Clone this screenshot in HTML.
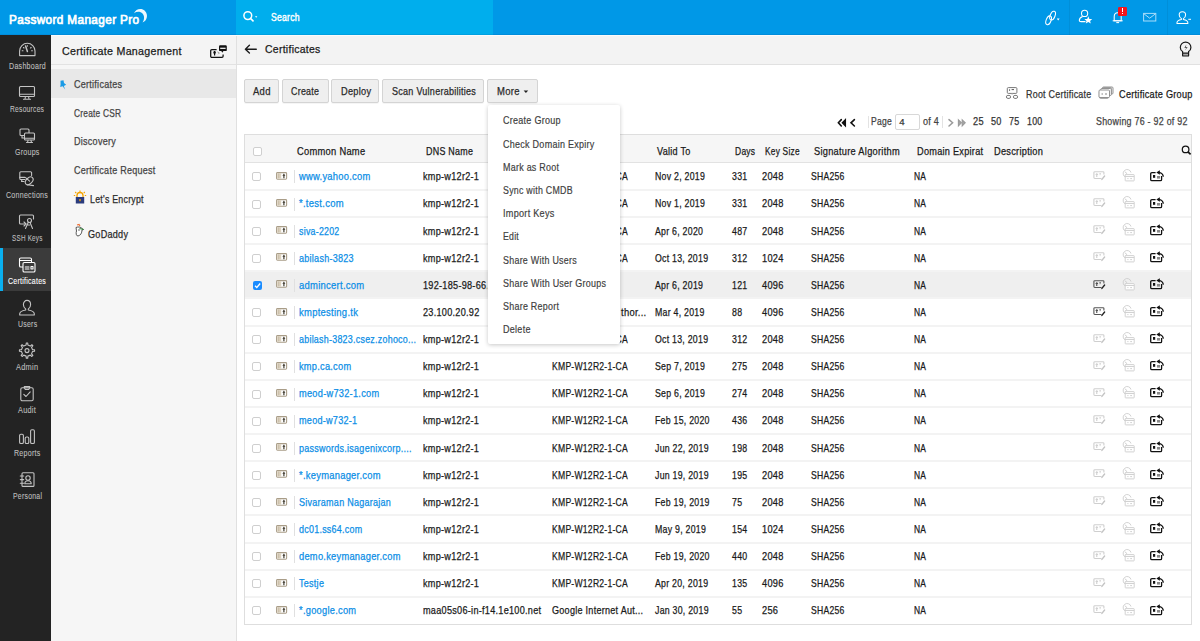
<!DOCTYPE html>
<html><head><meta charset="utf-8"><style>
html,body{margin:0;padding:0;}
body{width:1200px;height:641px;overflow:hidden;position:relative;background:#fff;font-family:"Liberation Sans", sans-serif;}
.t{position:absolute;white-space:nowrap;line-height:1;}
svg{overflow:visible}
</style></head><body>
<div style="position:absolute;left:0px;top:0px;width:1200px;height:35px;background:#0098e7"></div>
<div style="position:absolute;left:236px;top:0px;width:257px;height:35px;background:#00aeed"></div>
<div style="position:absolute;left:0px;top:34px;width:1200px;height:1px;background:rgba(0,40,120,0.10)"></div>
<div style="position:absolute;left:1069px;top:0px;width:1px;height:35px;background:rgba(0,0,0,0.06)"></div>
<div style="position:absolute;left:1167px;top:0px;width:1px;height:35px;background:rgba(0,0,0,0.06)"></div>
<div class="t" style="left:9.10px;top:14.00px;font-size:12.3px;letter-spacing:0.4px;transform:scaleX(0.9564);transform-origin:0 0;color:#fff;font-weight:normal;-webkit-text-stroke:0.7px #fff;">Password Manager Pro</div>
<svg style="position:absolute;left:130px;top:6px" width="20" height="20" viewBox="0 0 20 20"><path d="M4 7.3 C5.5 3.6 9.5 2.2 12.8 3.5 C17 5.3 18.3 10.6 15.6 14.3 C14.8 15.3 13.6 16.1 12.5 16.4 C14.6 13.8 14.6 9.8 12.5 7.6 C10.4 5.4 6.9 5.3 4 7.3 Z" fill="#fff" opacity="0.93"/></svg>
<svg style="position:absolute;left:238px;top:6px" width="24" height="20" viewBox="238 6 24 20"><circle cx="247.8" cy="15.6" r="3.9" stroke="#fff" stroke-width="1.5" fill="none"/><path d="M250.6 18.5 L253 20.9" stroke="#fff" stroke-width="1.7" stroke-linecap="round"/><path d="M255 16.3 L257.4 16.3 L256.2 17.7 Z" fill="#fff"/></svg>
<div class="t" style="left:271.10px;top:13.00px;font-size:10.3px;letter-spacing:0.3px;transform:scaleX(0.8389);transform-origin:0 0;color:#fff;font-weight:normal;-webkit-text-stroke:0.4px #fff;">Search</div>
<svg style="position:absolute;left:1040px;top:5px" width="25" height="25" viewBox="1040 5 25 25"><ellipse cx="1052.6" cy="15.6" rx="2.4" ry="4.6" transform="rotate(22 1052.6 15.6)" stroke="#fff" stroke-width="1.05" fill="none"/><ellipse cx="1048.6" cy="20.3" rx="2.4" ry="4.6" transform="rotate(22 1048.6 20.3)" stroke="#fff" stroke-width="1.05" fill="none"/><path d="M1056.8 18.6 L1059.6 18.6 L1058.2 20.4 Z" fill="#fff"/></svg>
<svg style="position:absolute;left:1075px;top:5px" width="25" height="25" viewBox="1075 5 25 25"><circle cx="1084.6" cy="13.4" r="3.1" stroke="#fff" stroke-width="1.05" fill="none"/><path d="M1082.6 16.6 C1080.5 17.5 1079.3 19 1079.3 20.5 C1079.3 21.3 1080 21.6 1081 21.6 L1085.5 21.6" stroke="#fff" stroke-width="1.05" fill="none"/><path d="M1088.3 16.3 L1089.4 18.9 L1092.2 19.1 L1090.1 20.9 L1090.8 23.6 L1088.3 22.1 L1085.8 23.6 L1086.5 20.9 L1084.4 19.1 L1087.2 18.9 Z" fill="#fff"/></svg>
<svg style="position:absolute;left:1108px;top:5px" width="25" height="25" viewBox="1108 5 25 25"><path d="M1114.2 20.8 L1114.2 16.8 C1114.2 14.5 1115.6 12.8 1117.7 12.8 C1119.8 12.8 1121.2 14.5 1121.2 16.8 L1121.2 20.8 Z" stroke="#fff" stroke-width="1.05" fill="none"/><path d="M1112.7 20.8 L1122.7 20.8" stroke="#fff" stroke-width="1.05" fill="none"/><path d="M1116.3 22.6 L1119.1 22.6" stroke="#fff" stroke-width="1.05" fill="none"/></svg>
<div style="position:absolute;left:1118px;top:6.5px;width:9px;height:9px;background:#f5141c;border-radius:1.2px"></div>
<div style="position:absolute;left:1122px;top:8px;width:1.2px;height:4px;background:#fff"></div>
<div style="position:absolute;left:1122px;top:13px;width:1.2px;height:1.2px;background:#fff"></div>
<svg style="position:absolute;left:1140px;top:10px" width="20" height="15" viewBox="1140 10 20 15"><rect x="1143.6" y="13.4" width="12.2" height="7.6" stroke="#a8dcfa" stroke-width="1" fill="none"/><path d="M1143.8 13.7 L1149.7 18.2 L1155.6 13.7" stroke="#a8dcfa" stroke-width="1" fill="none"/></svg>
<svg style="position:absolute;left:1172px;top:8px" width="25" height="20" viewBox="1172 8 25 20"><path d="M1181.4 19.4 L1181.4 18.6 C1180 17.9 1179.2 16.4 1179.2 14.8 C1179.2 12.9 1180.5 11.8 1182.4 11.8 C1184.3 11.8 1185.6 12.9 1185.6 14.8 C1185.6 16.4 1184.8 17.9 1183.4 18.6 L1183.4 19.4 C1186 19.9 1187.8 20.9 1187.8 22.6 L1187.8 23.5 L1177 23.5 L1177 22.6 C1177 20.9 1178.8 19.9 1181.4 19.4 Z" stroke="#fff" stroke-width="1.05" fill="none"/><path d="M1188.3 19.3 L1191 19.3" stroke="#fff" stroke-width="1"/></svg>
<div style="position:absolute;left:0px;top:35px;width:51px;height:606px;background:#232323"></div>
<div style="position:absolute;left:0px;top:248px;width:51px;height:43px;background:#3b3b3b"></div>
<div style="position:absolute;left:0px;top:248px;width:3px;height:43px;background:#0ab0f0"></div>
<div class="t" style="left:8.90px;top:63.00px;font-size:8.2px;letter-spacing:0.3px;transform:scaleX(0.8659);transform-origin:0 0;color:#bdbdbd;font-weight:normal;-webkit-text-stroke:0.1px #bdbdbd;">Dashboard</div>
<div class="t" style="left:10.10px;top:106.00px;font-size:8.2px;letter-spacing:0.3px;transform:scaleX(0.8174);transform-origin:0 0;color:#bdbdbd;font-weight:normal;-webkit-text-stroke:0.1px #bdbdbd;">Resources</div>
<div class="t" style="left:15.00px;top:149.00px;font-size:8.2px;letter-spacing:0.3px;transform:scaleX(0.8593);transform-origin:0 0;color:#bdbdbd;font-weight:normal;-webkit-text-stroke:0.1px #bdbdbd;">Groups</div>
<div class="t" style="left:5.80px;top:192.00px;font-size:8.2px;letter-spacing:0.3px;transform:scaleX(0.8623);transform-origin:0 0;color:#bdbdbd;font-weight:normal;-webkit-text-stroke:0.1px #bdbdbd;">Connections</div>
<div class="t" style="left:11.70px;top:235.00px;font-size:8.2px;letter-spacing:0.3px;transform:scaleX(0.7706);transform-origin:0 0;color:#bdbdbd;font-weight:normal;-webkit-text-stroke:0.1px #bdbdbd;">SSH Keys</div>
<div class="t" style="left:8.10px;top:278.00px;font-size:8.2px;letter-spacing:0.3px;transform:scaleX(0.8555);transform-origin:0 0;color:#fff;font-weight:normal;-webkit-text-stroke:0.1px #fff;">Certificates</div>
<div class="t" style="left:17.75px;top:321.00px;font-size:8.2px;letter-spacing:0.3px;transform:scaleX(0.8473);transform-origin:0 0;color:#bdbdbd;font-weight:normal;-webkit-text-stroke:0.1px #bdbdbd;">Users</div>
<div class="t" style="left:16.00px;top:364.00px;font-size:8.2px;letter-spacing:0.3px;transform:scaleX(0.9040);transform-origin:0 0;color:#bdbdbd;font-weight:normal;-webkit-text-stroke:0.1px #bdbdbd;">Admin</div>
<div class="t" style="left:18.40px;top:407.00px;font-size:8.2px;letter-spacing:0.3px;transform:scaleX(0.8947);transform-origin:0 0;color:#bdbdbd;font-weight:normal;-webkit-text-stroke:0.1px #bdbdbd;">Audit</div>
<div class="t" style="left:13.70px;top:450.00px;font-size:8.2px;letter-spacing:0.3px;transform:scaleX(0.8623);transform-origin:0 0;color:#bdbdbd;font-weight:normal;-webkit-text-stroke:0.1px #bdbdbd;">Reports</div>
<div class="t" style="left:12.80px;top:493.00px;font-size:8.2px;letter-spacing:0.3px;transform:scaleX(0.8418);transform-origin:0 0;color:#bdbdbd;font-weight:normal;-webkit-text-stroke:0.1px #bdbdbd;">Personal</div>
<svg style="position:absolute;left:17px;top:42px" width="20" height="16" viewBox="0 0 20 16" fill="none" stroke="#c4c4c4" stroke-width="1.1" stroke-linejoin="round" stroke-linecap="round"><path d="M2.6 13.6 L2.6 9 A7.7 7.7 0 0 1 18 9 L18 13.6 Z"/><path d="M8.6 4 L10.4 9.6" stroke-width="1.5"/><path d="M5.2 8.8 L6 8.8 M14.6 8.8 L15.4 8.8 M10.3 3.6 L10.3 4.3 M6.5 5.5 L7 6 M14.1 5.5 L13.6 6"/></svg>
<svg style="position:absolute;left:17px;top:85px" width="20" height="16" viewBox="0 0 20 16" fill="none" stroke="#c4c4c4" stroke-width="1.1" stroke-linejoin="round" stroke-linecap="round"><rect x="2.5" y="1.5" width="15" height="10" rx="1"/><path d="M2.5 9.3 L17.5 9.3"/><path d="M8.5 11.5 L8 14 M11.5 11.5 L12 14 M6.5 14.2 L13.5 14.2"/></svg>
<svg style="position:absolute;left:17px;top:128px" width="20" height="16" viewBox="0 0 20 16" fill="none" stroke="#c4c4c4" stroke-width="1.1" stroke-linejoin="round" stroke-linecap="round"><rect x="3" y="1" width="9" height="6.5" rx="1"/><rect x="7.5" y="5" width="10" height="7" rx="1" fill="#232323"/><path d="M7.5 10.3 L17.5 10.3 M11 12.3 L10.5 14.5 M14 12.3 L14.5 14.5 M9.5 14.5 L15.5 14.5 M5 7.5 L5 10 L7 10"/></svg>
<svg style="position:absolute;left:17px;top:171px" width="20" height="16" viewBox="0 0 20 16" fill="none" stroke="#c4c4c4" stroke-width="1.1" stroke-linejoin="round" stroke-linecap="round"><path d="M8 8.5 L3.8 8.5 A1 1 0 0 1 2.8 7.5 L2.8 1.8 A1 1 0 0 1 3.8 0.8 L13.6 0.8 A1 1 0 0 1 14.6 1.8 L14.6 4.5"/><path d="M2.8 6.4 L8 6.4 M5 8.5 L4.5 10.5 L7 10.5"/><ellipse cx="12.2" cy="9.8" rx="4.6" ry="2.9" transform="rotate(-45 12.2 9.8)" fill="#232323"/><path d="M8.6 6.6 L12.6 10.2 M10.5 13.8 L16.5 14.6"/></svg>
<svg style="position:absolute;left:17px;top:214px" width="20" height="16" viewBox="0 0 20 16" fill="none" stroke="#c4c4c4" stroke-width="1.1" stroke-linejoin="round" stroke-linecap="round"><path d="M9 10 L3.5 10 A1 1 0 0 1 2.5 9 L2.5 2 A1 1 0 0 1 3.5 1 L15.5 1 A1 1 0 0 1 16.5 2 L16.5 5"/><circle cx="12.5" cy="6.5" r="2"/><path d="M11.3 8.3 L8.5 14.5 M13 8.5 L15.5 14.5 M10.5 11 L12.5 11"/><path d="M7 8 L9 10 L7 12"/></svg>
<svg style="position:absolute;left:17px;top:256.5px" width="20" height="16" viewBox="0 0 20 16" fill="none" stroke="#fff" stroke-width="1.1" stroke-linejoin="round" stroke-linecap="round"><rect x="2.5" y="1" width="12" height="9" rx="1.3"/><path d="M2.5 3.5 L14.5 3.5"/><rect x="6" y="5.5" width="12" height="9.5" rx="1.3" fill="#3b3b3b"/><path d="M8.3 10 L12 10 M8.3 12 L12 12"/><rect x="14" y="9.5" width="2" height="2.5"/></svg>
<svg style="position:absolute;left:17px;top:299.5px" width="20" height="16" viewBox="0 0 20 16" fill="none" stroke="#c4c4c4" stroke-width="1.1" stroke-linejoin="round" stroke-linecap="round"><path d="M8.7 10 L8.7 9 C7.3 8.2 6.4 6.6 6.4 4.6 C6.4 2 8 0.4 10 0.4 C12 0.4 13.6 2 13.6 4.6 C13.6 6.6 12.7 8.2 11.3 9 L11.3 10 C14.6 10.6 17.3 11.8 17.3 13.8 L17.3 15 L2.7 15 L2.7 13.8 C2.7 11.8 5.4 10.6 8.7 10 Z"/></svg>
<svg style="position:absolute;left:17px;top:342.5px" width="20" height="16" viewBox="0 0 20 16" fill="none" stroke="#c4c4c4" stroke-width="1.1" stroke-linejoin="round" stroke-linecap="round"><path d="M15.53 6.72 L17.57 6.88 L17.57 8.32 L15.53 8.48 L14.53 10.89 L15.86 12.44 L14.84 13.46 L13.29 12.13 L10.88 13.13 L10.72 15.17 L9.28 15.17 L9.12 13.13 L6.71 12.13 L5.16 13.46 L4.14 12.44 L5.47 10.89 L4.47 8.48 L2.43 8.32 L2.43 6.88 L4.47 6.72 L5.47 4.31 L4.14 2.76 L5.16 1.74 L6.71 3.07 L9.12 2.07 L9.28 0.03 L10.72 0.03 L10.88 2.07 L13.29 3.07 L14.84 1.74 L15.86 2.76 L14.53 4.31 Z"/><circle cx="10" cy="7.6" r="2"/></svg>
<svg style="position:absolute;left:17px;top:385.5px" width="20" height="16" viewBox="0 0 20 16" fill="none" stroke="#c4c4c4" stroke-width="1.1" stroke-linejoin="round" stroke-linecap="round"><rect x="3.8" y="1.8" width="12.4" height="13" rx="1.5"/><path d="M7.3 1.8 L7.3 0.6 L12.7 0.6 L12.7 1.8 L11.7 3.4 L8.3 3.4 Z"/><path d="M6.8 8.3 L9 10.5 L13.2 5.8"/></svg>
<svg style="position:absolute;left:17px;top:428.5px" width="20" height="16" viewBox="0 0 20 16" fill="none" stroke="#c4c4c4" stroke-width="1.1" stroke-linejoin="round" stroke-linecap="round"><rect x="2.6" y="5.2" width="3.8" height="9.3" rx="1.3"/><rect x="8.2" y="8" width="3.6" height="6.5" rx="1.3"/><rect x="13.6" y="0.8" width="3.8" height="13.7" rx="1.3"/></svg>
<svg style="position:absolute;left:17px;top:471.5px" width="20" height="16" viewBox="0 0 20 16" fill="none" stroke="#c4c4c4" stroke-width="1.1" stroke-linejoin="round" stroke-linecap="round"><rect x="5" y="0.8" width="12" height="13.6" rx="1"/><path d="M3.3 4 L6.7 4 M3.3 7.6 L6.7 7.6 M3.3 11.2 L6.7 11.2"/><circle cx="11" cy="6" r="2.2"/><path d="M7.8 11.8 C7.8 9.6 9.2 8.8 11 8.8 C12.8 8.8 14.2 9.6 14.2 11.8 Z"/></svg>
<div style="position:absolute;left:51px;top:35px;width:185px;height:606px;background:#f6f6f6"></div>
<div style="position:absolute;left:51px;top:35px;width:185px;height:29px;background:#f4f4f4"></div>
<div style="position:absolute;left:51px;top:64px;width:185px;height:1px;background:#e2e2e2"></div>
<div style="position:absolute;left:51px;top:69px;width:185px;height:29px;background:#e8e8e8"></div>
<div style="position:absolute;left:236px;top:35px;width:1px;height:606px;background:#e0e0e0"></div>
<div class="t" style="left:62.30px;top:46.00px;font-size:11.3px;letter-spacing:0.3px;transform:scaleX(0.9457);transform-origin:0 0;color:#1a1a1a;font-weight:normal;-webkit-text-stroke:0.25px #1a1a1a;">Certificate Management</div>
<svg style="position:absolute;left:204px;top:40px" width="30" height="22" viewBox="204 40 30 22" fill="none" stroke="#111" stroke-width="1.25"><path d="M216.6 49.7 L211.8 49.7 A1.1 1.1 0 0 0 210.7 50.8 L210.7 56.3 A1.1 1.1 0 0 0 211.8 57.4 L222 57.4 A1.1 1.1 0 0 0 223.1 56.3 L223.1 54.6"/><rect x="219" y="45.2" width="7.8" height="5.9" rx="1.2" fill="#111" stroke="none"/><rect x="220.2" y="47.7" width="5.4" height="1.2" fill="#fff" stroke="none"/><path d="M221.2 50.8 L222.3 52.8 L223.6 50.8 Z" fill="#111" stroke="none"/><path d="M213.3 52.6 C213.3 51.7 213.9 51.1 214.6 51.1 C215.3 51.1 215.9 51.7 215.9 52.6 C215.9 53.3 215.5 53.7 215.2 53.9 L215.2 55.4 L214 55.4 L214 53.9 C213.7 53.7 213.3 53.3 213.3 52.6 Z" fill="#111" stroke="none"/><path d="M217.4 51.9 L219.4 52.9 L218.2 54.2" stroke="#999" stroke-width="0.9"/></svg>
<svg style="position:absolute;left:59px;top:79.5px" width="8" height="10" viewBox="0 0 8 10"><path d="M1.5 0.8 L4.5 0.3 L5 3 L7.2 4.8 L4.8 6 L6.2 9.5 L3.6 6.3 L1.2 7 L1.6 4.2 Z" fill="#1a9be6"/></svg>
<div class="t" style="left:73.70px;top:79.00px;font-size:10.6px;letter-spacing:0.3px;transform:scaleX(0.8526);transform-origin:0 0;color:#444;font-weight:normal;-webkit-text-stroke:0.25px #444;">Certificates</div>
<div class="t" style="left:73.70px;top:108.00px;font-size:10.6px;letter-spacing:0.3px;transform:scaleX(0.7872);transform-origin:0 0;color:#444;font-weight:normal;-webkit-text-stroke:0.25px #444;">Create CSR</div>
<div class="t" style="left:73.60px;top:136.00px;font-size:10.6px;letter-spacing:0.3px;transform:scaleX(0.8542);transform-origin:0 0;color:#444;font-weight:normal;-webkit-text-stroke:0.25px #444;">Discovery</div>
<div class="t" style="left:73.60px;top:165.00px;font-size:10.6px;letter-spacing:0.3px;transform:scaleX(0.8519);transform-origin:0 0;color:#444;font-weight:normal;-webkit-text-stroke:0.25px #444;">Certificate Request</div>
<div class="t" style="left:90.00px;top:194.00px;font-size:10.6px;letter-spacing:0.3px;transform:scaleX(0.8304);transform-origin:0 0;color:#2a2a2a;font-weight:normal;-webkit-text-stroke:0.25px #2a2a2a;">Let's Encrypt</div>
<div class="t" style="left:88.00px;top:229.00px;font-size:10.6px;letter-spacing:0.3px;transform:scaleX(0.8586);transform-origin:0 0;color:#2a2a2a;font-weight:normal;-webkit-text-stroke:0.25px #2a2a2a;">GoDaddy</div>
<svg style="position:absolute;left:73px;top:190px" width="14" height="14" viewBox="0 0 14 14"><path d="M4 7 L4 5.5 A3 3 0 0 1 10 5.5 L10 7" stroke="#f4a300" stroke-width="1.3" fill="none"/><path d="M7 0.5 L7 2 M2.2 2 L3.2 3 M11.8 2 L10.8 3 M0.8 5.5 L2.2 5.5 M13.2 5.5 L11.8 5.5" stroke="#f4a300" stroke-width="1.1"/><rect x="2.8" y="7" width="8.4" height="6.5" fill="#2a3b7d"/><rect x="6.3" y="9" width="1.4" height="2.2" fill="#f4a300"/></svg>
<svg style="position:absolute;left:74px;top:224px" width="11" height="13" viewBox="0 0 11 13"><path d="M3 1 L5 0.5 L6 2" stroke="#ef6c2f" stroke-width="1.2" fill="none"/><path d="M2 3.5 C4 2.5 7 3 8 4.5 L9.5 5.5 L8 6 C8 9 6.5 11.5 4 12 C2 12 1.8 9 2.5 7 Z" stroke="#444" stroke-width="0.9" fill="#fff"/><path d="M5.5 4.5 L9.5 5.5" stroke="#2f8a3a" stroke-width="1.1"/><circle cx="5" cy="6" r="0.7" fill="#333"/></svg>
<div style="position:absolute;left:237px;top:35px;width:963px;height:29px;background:#f3f3f3"></div>
<div style="position:absolute;left:51px;top:35px;width:1149px;height:1px;background:#fbfbfb"></div>
<div style="position:absolute;left:237px;top:64px;width:963px;height:1px;background:#e1e1e1"></div>
<svg style="position:absolute;left:244px;top:44px" width="14" height="11" viewBox="0 0 14 11" fill="none" stroke="#1a1a1a" stroke-width="1.35" stroke-linecap="round" stroke-linejoin="round"><path d="M5.4 1.3 L1.4 5.2 L5.4 9.1 M1.4 5.2 L12.3 5.2"/></svg>
<div class="t" style="left:264.70px;top:44.00px;font-size:11.5px;letter-spacing:0.3px;transform:scaleX(0.9095);transform-origin:0 0;color:#1a1a1a;font-weight:normal;-webkit-text-stroke:0.25px #1a1a1a;">Certificates</div>
<svg style="position:absolute;left:1172px;top:38px" width="26" height="24" viewBox="1172 38 26 24" fill="none" stroke="#1a1a1a" stroke-width="1.2"><path d="M1182.6 53.2 L1182.6 51.6 C1181.1 50.6 1180.3 49 1180.3 47.4 A5.3 5.3 0 0 1 1190.9 47.4 C1190.9 49 1190.1 50.6 1188.6 51.6 L1188.6 53.2"/><rect x="1182.6" y="53.2" width="6" height="2.8" rx="0.6" fill="#aaa"/><path d="M1186.4 44.6 L1184.4 48 L1186.6 47.6 L1184.9 50.6 L1187.6 47 L1185.6 47.3 Z" fill="#111" stroke="none"/></svg>
<div style="position:absolute;left:243.5px;top:79px;width:33.5px;height:21.5px;background:#efefef;border:1px solid #d4d4d4;border-radius:2px;box-shadow:0 1px 0 rgba(0,0,0,0.04)"></div>
<div class="t" style="left:252.60px;top:87.00px;font-size:10.3px;letter-spacing:0.3px;transform:scaleX(0.9190);transform-origin:0 0;color:#2a2a2a;font-weight:normal;-webkit-text-stroke:0.25px #2a2a2a;">Add</div>
<div style="position:absolute;left:281.8px;top:79px;width:44.9px;height:21.5px;background:#efefef;border:1px solid #d4d4d4;border-radius:2px;box-shadow:0 1px 0 rgba(0,0,0,0.04)"></div>
<div class="t" style="left:291.10px;top:87.00px;font-size:10.3px;letter-spacing:0.3px;transform:scaleX(0.8642);transform-origin:0 0;color:#2a2a2a;font-weight:normal;-webkit-text-stroke:0.25px #2a2a2a;">Create</div>
<div style="position:absolute;left:331.3px;top:79px;width:46.2px;height:21.5px;background:#efefef;border:1px solid #d4d4d4;border-radius:2px;box-shadow:0 1px 0 rgba(0,0,0,0.04)"></div>
<div class="t" style="left:340.50px;top:87.00px;font-size:10.3px;letter-spacing:0.3px;transform:scaleX(0.8962);transform-origin:0 0;color:#2a2a2a;font-weight:normal;-webkit-text-stroke:0.25px #2a2a2a;">Deploy</div>
<div style="position:absolute;left:382px;top:79px;width:100.2px;height:21.5px;background:#efefef;border:1px solid #d4d4d4;border-radius:2px;box-shadow:0 1px 0 rgba(0,0,0,0.04)"></div>
<div class="t" style="left:391.50px;top:87.00px;font-size:10.3px;letter-spacing:0.3px;transform:scaleX(0.8760);transform-origin:0 0;color:#2a2a2a;font-weight:normal;-webkit-text-stroke:0.25px #2a2a2a;">Scan Vulnerabilities</div>
<div style="position:absolute;left:487.3px;top:79px;width:48.4px;height:21.5px;background:#efefef;border:1px solid #d4d4d4;border-radius:2px;box-shadow:0 1px 0 rgba(0,0,0,0.04)"></div>
<div class="t" style="left:496.70px;top:87.00px;font-size:10.3px;letter-spacing:0.3px;transform:scaleX(0.9227);transform-origin:0 0;color:#2a2a2a;font-weight:normal;-webkit-text-stroke:0.25px #2a2a2a;">More</div>
<svg style="position:absolute;left:523px;top:90px" width="6" height="4" viewBox="0 0 6 4"><path d="M0.6 0.6 L5.2 0.6 L2.9 3 Z" fill="#222"/></svg>
<svg style="position:absolute;left:1002px;top:83px" width="20" height="18" viewBox="1002 83 20 18" fill="none" stroke="#777" stroke-width="1"><rect x="1007.3" y="87.6" width="9.6" height="5.8" rx="1"/><path d="M1009.6 89.3 L1009.6 90.8 M1011.6 89.6 L1014 89.6" stroke="#444" stroke-width="0.9"/><path d="M1012.1 93.4 L1012.1 94.8" stroke="#bbb"/><rect x="1006.4" y="95.4" width="4.2" height="3" rx="1.5"/><rect x="1013.4" y="95.4" width="4.2" height="3" rx="1.5"/></svg>
<svg style="position:absolute;left:1096px;top:83px" width="20" height="18" viewBox="1096 83 20 18" fill="none" stroke="#999" stroke-width="0.9"><rect x="1102.6" y="87.6" width="9" height="6.4" rx="1"/><rect x="1101" y="89.3" width="9" height="6.6" rx="1" fill="#fff"/><rect x="1099.4" y="91" width="9.2" height="7.2" rx="1" fill="#fff" stroke="#888" stroke-width="1"/><path d="M1101.8 94.6 L1102.8 94.6 M1104.4 94.6 L1106.2 94.6" stroke="#333" stroke-width="1.3"/></svg>
<div class="t" style="left:1025.90px;top:90.00px;font-size:10.4px;letter-spacing:0.3px;transform:scaleX(0.8575);transform-origin:0 0;color:#333;font-weight:normal;-webkit-text-stroke:0.25px #333;">Root Certificate</div>
<svg style="position:absolute;left:1098px;top:86px" width="16" height="13" viewBox="0 0 16 13" fill="none" stroke="#888" stroke-width="0.9"><rect x="4.5" y="1" width="10.5" height="7" rx="1"/><rect x="2.8" y="2.5" width="10.5" height="7" rx="1" fill="#fff"/><rect x="1" y="4" width="10.5" height="7.5" rx="1" fill="#fff"/><path d="M3.5 8 L5 8 M7 8 L9 8" stroke-width="1.2"/></svg>
<div class="t" style="left:1119.20px;top:90.00px;font-size:10.4px;letter-spacing:0.3px;transform:scaleX(0.8810);transform-origin:0 0;color:#1a1a1a;font-weight:normal;-webkit-text-stroke:0.25px #1a1a1a;">Certificate Group</div>
<svg style="position:absolute;left:830px;top:110px" width="40" height="22" viewBox="830 110 40 22" fill="none" stroke="#111" stroke-width="1.6" stroke-linejoin="miter" stroke-linecap="round"><path d="M841.3 119.6 L838.4 122.8 L841.3 126"/><path d="M845.4 119.6 L842.3 122.8 L845.4 126 Z" fill="#111" stroke-width="1.3"/><path d="M854.4 119.6 L851 122.8 L854.4 126"/></svg>
<div style="position:absolute;left:867.5px;top:115.5px;width:1px;height:12.5px;background:#e3e3e3"></div>
<div class="t" style="left:870.60px;top:117.00px;font-size:10.2px;letter-spacing:0.3px;transform:scaleX(0.8375);transform-origin:0 0;color:#444;font-weight:normal;-webkit-text-stroke:0.25px #444;">Page</div>
<div style="position:absolute;left:894.5px;top:113.5px;width:23px;height:14.5px;border:1px solid #d8d8d8;border-radius:2px;background:#fff"></div>
<div class="t" style="left:899.20px;top:117.00px;font-size:9.6px;letter-spacing:0px;transform:scaleX(1.0000);transform-origin:0 0;color:#333;font-weight:normal;-webkit-text-stroke:0.25px #333;">4</div>
<div class="t" style="left:923.00px;top:117.00px;font-size:10.2px;letter-spacing:0.3px;transform:scaleX(0.8866);transform-origin:0 0;color:#444;font-weight:normal;-webkit-text-stroke:0.25px #444;">of 4</div>
<div style="position:absolute;left:942px;top:115.5px;width:1px;height:12.5px;background:#e3e3e3"></div>
<svg style="position:absolute;left:944px;top:110px" width="26" height="22" viewBox="944 110 26 22" fill="none" stroke="#9a9a9a" stroke-width="1.5" stroke-linecap="round"><path d="M949 119.6 L952.6 122.8 L949 126"/><path d="M958.4 119.8 L961.4 122.8 L958.4 125.8 Z" fill="#a5a5a5" stroke-width="1.1"/><path d="M962.2 119.8 L965.2 122.8 L962.2 125.8 Z" fill="#a5a5a5" stroke-width="1.1"/></svg>
<div class="t" style="left:972.80px;top:117.00px;font-size:10.2px;letter-spacing:0.3px;transform:scaleX(0.9035);transform-origin:0 0;color:#333;font-weight:normal;-webkit-text-stroke:0.25px #333;">25</div>
<div class="t" style="left:990.60px;top:117.00px;font-size:10.2px;letter-spacing:0.3px;transform:scaleX(0.8949);transform-origin:0 0;color:#333;font-weight:normal;-webkit-text-stroke:0.25px #333;">50</div>
<div class="t" style="left:1008.60px;top:117.00px;font-size:10.2px;letter-spacing:0.3px;transform:scaleX(0.8776);transform-origin:0 0;color:#333;font-weight:normal;-webkit-text-stroke:0.25px #333;">75</div>
<div class="t" style="left:1026.50px;top:117.00px;font-size:10.2px;letter-spacing:0.3px;transform:scaleX(0.8676);transform-origin:0 0;color:#333;font-weight:normal;-webkit-text-stroke:0.25px #333;">100</div>
<div class="t" style="left:1095.90px;top:117.00px;font-size:10.2px;letter-spacing:0.3px;transform:scaleX(0.8694);transform-origin:0 0;color:#444;font-weight:normal;-webkit-text-stroke:0.25px #444;">Showing 76 - 92 of 92</div>
<div style="position:absolute;left:243.5px;top:134px;width:946.0px;height:488.5px;border:1px solid #dedede;background:#fff"></div>
<div style="position:absolute;left:244.5px;top:135px;width:946.0px;height:28px;background:#f6f6f6"></div>
<div style="position:absolute;left:244.5px;top:162px;width:946.0px;height:1px;background:#e2e2e2"></div>
<div style="position:absolute;left:252.5px;top:147px;width:7px;height:7px;border-radius:2px;border:1px solid #cfcfcf;background:#fff"></div>
<div class="t" style="left:297.30px;top:147.00px;font-size:10.3px;letter-spacing:0.3px;transform:scaleX(0.9068);transform-origin:0 0;color:#1a1a1a;font-weight:normal;-webkit-text-stroke:0.25px #1a1a1a;">Common Name</div>
<div class="t" style="left:425.80px;top:147.00px;font-size:10.3px;letter-spacing:0.3px;transform:scaleX(0.8658);transform-origin:0 0;color:#1a1a1a;font-weight:normal;-webkit-text-stroke:0.25px #1a1a1a;">DNS Name</div>
<div class="t" style="left:553.00px;top:147.00px;font-size:10.3px;letter-spacing:0px;transform:scaleX(1.0000);transform-origin:0 0;color:#1a1a1a;font-weight:normal;-webkit-text-stroke:0.25px #1a1a1a;">Issuer</div>
<div class="t" style="left:657.20px;top:147.00px;font-size:10.3px;letter-spacing:0.3px;transform:scaleX(0.8786);transform-origin:0 0;color:#1a1a1a;font-weight:normal;-webkit-text-stroke:0.25px #1a1a1a;">Valid To</div>
<div class="t" style="left:734.50px;top:147.00px;font-size:10.3px;letter-spacing:0.3px;transform:scaleX(0.8243);transform-origin:0 0;color:#1a1a1a;font-weight:normal;-webkit-text-stroke:0.25px #1a1a1a;">Days</div>
<div class="t" style="left:765.10px;top:147.00px;font-size:10.3px;letter-spacing:0.3px;transform:scaleX(0.8073);transform-origin:0 0;color:#1a1a1a;font-weight:normal;-webkit-text-stroke:0.25px #1a1a1a;">Key Size</div>
<div class="t" style="left:814.10px;top:147.00px;font-size:10.3px;letter-spacing:0.3px;transform:scaleX(0.8985);transform-origin:0 0;color:#1a1a1a;font-weight:normal;-webkit-text-stroke:0.25px #1a1a1a;">Signature Algorithm</div>
<div class="t" style="left:917.00px;top:147.00px;font-size:10.3px;letter-spacing:0.3px;transform:scaleX(0.8896);transform-origin:0 0;color:#1a1a1a;font-weight:normal;-webkit-text-stroke:0.25px #1a1a1a;">Domain Expirat</div>
<div class="t" style="left:993.90px;top:147.00px;font-size:10.3px;letter-spacing:0.3px;transform:scaleX(0.8954);transform-origin:0 0;color:#1a1a1a;font-weight:normal;-webkit-text-stroke:0.25px #1a1a1a;">Description</div>
<svg style="position:absolute;left:1181px;top:145px" width="10" height="10" viewBox="0 0 10 10" fill="none" stroke="#111" stroke-width="1.25"><circle cx="4.6" cy="4.4" r="3.3"/><path d="M7 6.9 L9.6 9.3" stroke-width="1.7"/></svg>
<div style="position:absolute;left:244.5px;top:189px;width:946.0px;height:2px;background:#f3f3f3"></div>
<div style="position:absolute;left:252.3px;top:172px;width:7px;height:7px;border-radius:2px;border:1px solid #cfcfcf;background:#fff"></div>
<svg style="position:absolute;left:275.8px;top:172px" width="12" height="9" viewBox="0 0 12 9"><rect x="0.6" y="0.6" width="10" height="6.6" rx="0.9" fill="#fff" stroke="#a99d88" stroke-width="1.1"/><rect x="1.2" y="1.2" width="4" height="5.4" fill="#dcd2bf"/><path d="M2.7 1.5 L2.7 6.3" stroke="#c3b8a2" stroke-width="0.8"/><path d="M7.9 1.5 L9.4 3.7 L8.5 3.7 L8.5 6.2 L7.3 6.2 L7.3 3.7 L6.4 3.7 Z" fill="#3f3a2e"/></svg>
<div style="position:absolute;left:294px;top:170px;width:1px;height:13px;background:#e0e0e0"></div>
<div class="t" style="left:298.75px;top:172.00px;font-size:10.4px;letter-spacing:0.3px;transform:scaleX(0.8984);transform-origin:0 0;color:#0b8ee6;font-weight:normal;-webkit-text-stroke:0.25px #0b8ee6;">www.yahoo.com</div>
<div class="t" style="left:423.30px;top:172.00px;font-size:10.4px;letter-spacing:0.3px;transform:scaleX(0.8793);transform-origin:0 0;color:#1a1a1a;font-weight:normal;-webkit-text-stroke:0.25px #1a1a1a;width:250px;overflow:hidden">kmp-w12r2-1</div>
<div class="t" style="left:551.80px;top:172.00px;font-size:10.4px;letter-spacing:0.3px;transform:scaleX(0.8270);transform-origin:0 0;color:#1a1a1a;font-weight:normal;-webkit-text-stroke:0.25px #1a1a1a;">KMP-W12R2-1-CA</div>
<div class="t" style="left:654.70px;top:172.00px;font-size:10.4px;letter-spacing:0.3px;transform:scaleX(0.8442);transform-origin:0 0;color:#1a1a1a;font-weight:normal;-webkit-text-stroke:0.25px #1a1a1a;">Nov 2, 2019</div>
<div class="t" style="left:731.50px;top:172.00px;font-size:10.4px;letter-spacing:0.3px;transform:scaleX(0.8432);transform-origin:0 0;color:#1a1a1a;font-weight:normal;-webkit-text-stroke:0.25px #1a1a1a;">331</div>
<div class="t" style="left:762.10px;top:172.00px;font-size:10.4px;letter-spacing:0.3px;transform:scaleX(0.8902);transform-origin:0 0;color:#1a1a1a;font-weight:normal;-webkit-text-stroke:0.25px #1a1a1a;">2048</div>
<div class="t" style="left:810.70px;top:172.00px;font-size:10.4px;letter-spacing:0.3px;transform:scaleX(0.8275);transform-origin:0 0;color:#1a1a1a;font-weight:normal;-webkit-text-stroke:0.25px #1a1a1a;">SHA256</div>
<div class="t" style="left:914.10px;top:172.00px;font-size:10.4px;letter-spacing:0.3px;transform:scaleX(0.8132);transform-origin:0 0;color:#1a1a1a;font-weight:normal;-webkit-text-stroke:0.25px #1a1a1a;">NA</div>
<svg style="position:absolute;left:1092.5px;top:171px" width="14" height="10" viewBox="0 0 14 10" fill="none"><path d="M8.5 7.5 L1.8 7.5 A0.9 0.9 0 0 1 0.9 6.6 L0.9 1.6 A0.9 0.9 0 0 1 1.8 0.7 L10 0.7 A0.9 0.9 0 0 1 10.9 1.6 L10.9 3.5" stroke="#cfcfcf" stroke-width="1.1"/><path d="M3.8 6 L3.8 2.8 M2.8 3.8 L3.8 2.6 L4.8 3.8" stroke="#c4c4c4" stroke-width="0.9"/><path d="M6.3 2.6 L8 2.6 M7.3 2.6 L7 4.2" stroke="#cfcfcf" stroke-width="0.7"/><path d="M8.9 8.4 L11.6 5" stroke="#c4c4c4" stroke-width="1.4" stroke-linecap="round"/></svg>
<svg style="position:absolute;left:1121.5px;top:169px" width="13" height="13" viewBox="0 0 13 13" fill="none" stroke="#cdcdcd" stroke-width="0.9"><path d="M3.6 8.2 A4 4 0 1 1 9 3.5"/><path d="M2.8 2.8 L4.8 4.3 L3.4 5.8"/><rect x="3.2" y="5.6" width="9" height="6.3" rx="0.5" fill="#fff"/><path d="M3.2 7.5 L12.2 7.5"/><path d="M5.3 9.6 L6.5 9.6 M8.2 9.6 L10 9.6"/></svg>
<svg style="position:absolute;left:1150px;top:170px" width="15" height="12" viewBox="0 0 15 12"><path d="M5.6 2.6 L1.9 2.6 A1.2 1.2 0 0 0 0.7 3.8 L0.7 9.4 A1.2 1.2 0 0 0 1.9 10.6 L10.4 10.6 A1.2 1.2 0 0 0 11.6 9.4 L11.6 6" fill="none" stroke="#111" stroke-width="1.3"/><rect x="3" y="5" width="2.2" height="2.8" fill="#111"/><rect x="7" y="6" width="3" height="2.6" fill="#8a8a8a"/><path d="M9 2.6 C11.3 2.6 12.8 4 13.4 6.6" fill="none" stroke="#111" stroke-width="1.3"/><path d="M9.8 0.2 L6.3 2.5 L9.8 4.8 Z" fill="#111"/></svg>
<div style="position:absolute;left:244.5px;top:216px;width:946.0px;height:2px;background:#f3f3f3"></div>
<div style="position:absolute;left:252.3px;top:200px;width:7px;height:7px;border-radius:2px;border:1px solid #cfcfcf;background:#fff"></div>
<svg style="position:absolute;left:275.8px;top:199px" width="12" height="9" viewBox="0 0 12 9"><rect x="0.6" y="0.6" width="10" height="6.6" rx="0.9" fill="#fff" stroke="#a99d88" stroke-width="1.1"/><rect x="1.2" y="1.2" width="4" height="5.4" fill="#dcd2bf"/><path d="M2.7 1.5 L2.7 6.3" stroke="#c3b8a2" stroke-width="0.8"/><path d="M7.9 1.5 L9.4 3.7 L8.5 3.7 L8.5 6.2 L7.3 6.2 L7.3 3.7 L6.4 3.7 Z" fill="#3f3a2e"/></svg>
<div style="position:absolute;left:294px;top:198px;width:1px;height:13px;background:#e0e0e0"></div>
<div class="t" style="left:298.70px;top:199.00px;font-size:10.4px;letter-spacing:0.3px;transform:scaleX(0.9115);transform-origin:0 0;color:#0b8ee6;font-weight:normal;-webkit-text-stroke:0.25px #0b8ee6;">*.test.com</div>
<div class="t" style="left:423.30px;top:199.00px;font-size:10.4px;letter-spacing:0.3px;transform:scaleX(0.8793);transform-origin:0 0;color:#1a1a1a;font-weight:normal;-webkit-text-stroke:0.25px #1a1a1a;width:250px;overflow:hidden">kmp-w12r2-1</div>
<div class="t" style="left:551.80px;top:199.00px;font-size:10.4px;letter-spacing:0.3px;transform:scaleX(0.8270);transform-origin:0 0;color:#1a1a1a;font-weight:normal;-webkit-text-stroke:0.25px #1a1a1a;">KMP-W12R2-1-CA</div>
<div class="t" style="left:654.70px;top:199.00px;font-size:10.4px;letter-spacing:0.3px;transform:scaleX(0.8442);transform-origin:0 0;color:#1a1a1a;font-weight:normal;-webkit-text-stroke:0.25px #1a1a1a;">Nov 1, 2019</div>
<div class="t" style="left:731.50px;top:199.00px;font-size:10.4px;letter-spacing:0.3px;transform:scaleX(0.8432);transform-origin:0 0;color:#1a1a1a;font-weight:normal;-webkit-text-stroke:0.25px #1a1a1a;">331</div>
<div class="t" style="left:762.10px;top:199.00px;font-size:10.4px;letter-spacing:0.3px;transform:scaleX(0.8902);transform-origin:0 0;color:#1a1a1a;font-weight:normal;-webkit-text-stroke:0.25px #1a1a1a;">2048</div>
<div class="t" style="left:810.70px;top:199.00px;font-size:10.4px;letter-spacing:0.3px;transform:scaleX(0.8275);transform-origin:0 0;color:#1a1a1a;font-weight:normal;-webkit-text-stroke:0.25px #1a1a1a;">SHA256</div>
<div class="t" style="left:914.10px;top:199.00px;font-size:10.4px;letter-spacing:0.3px;transform:scaleX(0.8132);transform-origin:0 0;color:#1a1a1a;font-weight:normal;-webkit-text-stroke:0.25px #1a1a1a;">NA</div>
<svg style="position:absolute;left:1092.5px;top:198px" width="14" height="10" viewBox="0 0 14 10" fill="none"><path d="M8.5 7.5 L1.8 7.5 A0.9 0.9 0 0 1 0.9 6.6 L0.9 1.6 A0.9 0.9 0 0 1 1.8 0.7 L10 0.7 A0.9 0.9 0 0 1 10.9 1.6 L10.9 3.5" stroke="#cfcfcf" stroke-width="1.1"/><path d="M3.8 6 L3.8 2.8 M2.8 3.8 L3.8 2.6 L4.8 3.8" stroke="#c4c4c4" stroke-width="0.9"/><path d="M6.3 2.6 L8 2.6 M7.3 2.6 L7 4.2" stroke="#cfcfcf" stroke-width="0.7"/><path d="M8.9 8.4 L11.6 5" stroke="#c4c4c4" stroke-width="1.4" stroke-linecap="round"/></svg>
<svg style="position:absolute;left:1121.5px;top:196px" width="13" height="13" viewBox="0 0 13 13" fill="none" stroke="#cdcdcd" stroke-width="0.9"><path d="M3.6 8.2 A4 4 0 1 1 9 3.5"/><path d="M2.8 2.8 L4.8 4.3 L3.4 5.8"/><rect x="3.2" y="5.6" width="9" height="6.3" rx="0.5" fill="#fff"/><path d="M3.2 7.5 L12.2 7.5"/><path d="M5.3 9.6 L6.5 9.6 M8.2 9.6 L10 9.6"/></svg>
<svg style="position:absolute;left:1150px;top:197px" width="15" height="12" viewBox="0 0 15 12"><path d="M5.6 2.6 L1.9 2.6 A1.2 1.2 0 0 0 0.7 3.8 L0.7 9.4 A1.2 1.2 0 0 0 1.9 10.6 L10.4 10.6 A1.2 1.2 0 0 0 11.6 9.4 L11.6 6" fill="none" stroke="#111" stroke-width="1.3"/><rect x="3" y="5" width="2.2" height="2.8" fill="#111"/><rect x="7" y="6" width="3" height="2.6" fill="#8a8a8a"/><path d="M9 2.6 C11.3 2.6 12.8 4 13.4 6.6" fill="none" stroke="#111" stroke-width="1.3"/><path d="M9.8 0.2 L6.3 2.5 L9.8 4.8 Z" fill="#111"/></svg>
<div style="position:absolute;left:244.5px;top:243px;width:946.0px;height:2px;background:#f3f3f3"></div>
<div style="position:absolute;left:252.3px;top:227px;width:7px;height:7px;border-radius:2px;border:1px solid #cfcfcf;background:#fff"></div>
<svg style="position:absolute;left:275.8px;top:226px" width="12" height="9" viewBox="0 0 12 9"><rect x="0.6" y="0.6" width="10" height="6.6" rx="0.9" fill="#fff" stroke="#a99d88" stroke-width="1.1"/><rect x="1.2" y="1.2" width="4" height="5.4" fill="#dcd2bf"/><path d="M2.7 1.5 L2.7 6.3" stroke="#c3b8a2" stroke-width="0.8"/><path d="M7.9 1.5 L9.4 3.7 L8.5 3.7 L8.5 6.2 L7.3 6.2 L7.3 3.7 L6.4 3.7 Z" fill="#3f3a2e"/></svg>
<div style="position:absolute;left:294px;top:225px;width:1px;height:13px;background:#e0e0e0"></div>
<div class="t" style="left:298.70px;top:227.00px;font-size:10.4px;letter-spacing:0.3px;transform:scaleX(0.8487);transform-origin:0 0;color:#0b8ee6;font-weight:normal;-webkit-text-stroke:0.25px #0b8ee6;">siva-2202</div>
<div class="t" style="left:423.30px;top:227.00px;font-size:10.4px;letter-spacing:0.3px;transform:scaleX(0.8793);transform-origin:0 0;color:#1a1a1a;font-weight:normal;-webkit-text-stroke:0.25px #1a1a1a;width:250px;overflow:hidden">kmp-w12r2-1</div>
<div class="t" style="left:551.80px;top:227.00px;font-size:10.4px;letter-spacing:0.3px;transform:scaleX(0.8270);transform-origin:0 0;color:#1a1a1a;font-weight:normal;-webkit-text-stroke:0.25px #1a1a1a;">KMP-W12R2-1-CA</div>
<div class="t" style="left:654.70px;top:227.00px;font-size:10.4px;letter-spacing:0.3px;transform:scaleX(0.8442);transform-origin:0 0;color:#1a1a1a;font-weight:normal;-webkit-text-stroke:0.25px #1a1a1a;">Apr 6, 2020</div>
<div class="t" style="left:731.50px;top:227.00px;font-size:10.4px;letter-spacing:0.3px;transform:scaleX(0.8432);transform-origin:0 0;color:#1a1a1a;font-weight:normal;-webkit-text-stroke:0.25px #1a1a1a;">487</div>
<div class="t" style="left:762.10px;top:227.00px;font-size:10.4px;letter-spacing:0.3px;transform:scaleX(0.8902);transform-origin:0 0;color:#1a1a1a;font-weight:normal;-webkit-text-stroke:0.25px #1a1a1a;">2048</div>
<div class="t" style="left:810.70px;top:227.00px;font-size:10.4px;letter-spacing:0.3px;transform:scaleX(0.8275);transform-origin:0 0;color:#1a1a1a;font-weight:normal;-webkit-text-stroke:0.25px #1a1a1a;">SHA256</div>
<div class="t" style="left:914.10px;top:227.00px;font-size:10.4px;letter-spacing:0.3px;transform:scaleX(0.8132);transform-origin:0 0;color:#1a1a1a;font-weight:normal;-webkit-text-stroke:0.25px #1a1a1a;">NA</div>
<svg style="position:absolute;left:1092.5px;top:225px" width="14" height="10" viewBox="0 0 14 10" fill="none"><path d="M8.5 7.5 L1.8 7.5 A0.9 0.9 0 0 1 0.9 6.6 L0.9 1.6 A0.9 0.9 0 0 1 1.8 0.7 L10 0.7 A0.9 0.9 0 0 1 10.9 1.6 L10.9 3.5" stroke="#cfcfcf" stroke-width="1.1"/><path d="M3.8 6 L3.8 2.8 M2.8 3.8 L3.8 2.6 L4.8 3.8" stroke="#c4c4c4" stroke-width="0.9"/><path d="M6.3 2.6 L8 2.6 M7.3 2.6 L7 4.2" stroke="#cfcfcf" stroke-width="0.7"/><path d="M8.9 8.4 L11.6 5" stroke="#c4c4c4" stroke-width="1.4" stroke-linecap="round"/></svg>
<svg style="position:absolute;left:1121.5px;top:223px" width="13" height="13" viewBox="0 0 13 13" fill="none" stroke="#cdcdcd" stroke-width="0.9"><path d="M3.6 8.2 A4 4 0 1 1 9 3.5"/><path d="M2.8 2.8 L4.8 4.3 L3.4 5.8"/><rect x="3.2" y="5.6" width="9" height="6.3" rx="0.5" fill="#fff"/><path d="M3.2 7.5 L12.2 7.5"/><path d="M5.3 9.6 L6.5 9.6 M8.2 9.6 L10 9.6"/></svg>
<svg style="position:absolute;left:1150px;top:224px" width="15" height="12" viewBox="0 0 15 12"><path d="M5.6 2.6 L1.9 2.6 A1.2 1.2 0 0 0 0.7 3.8 L0.7 9.4 A1.2 1.2 0 0 0 1.9 10.6 L10.4 10.6 A1.2 1.2 0 0 0 11.6 9.4 L11.6 6" fill="none" stroke="#111" stroke-width="1.3"/><rect x="3" y="5" width="2.2" height="2.8" fill="#111"/><rect x="7" y="6" width="3" height="2.6" fill="#8a8a8a"/><path d="M9 2.6 C11.3 2.6 12.8 4 13.4 6.6" fill="none" stroke="#111" stroke-width="1.3"/><path d="M9.8 0.2 L6.3 2.5 L9.8 4.8 Z" fill="#111"/></svg>
<div style="position:absolute;left:244.5px;top:270px;width:946.0px;height:2px;background:#f3f3f3"></div>
<div style="position:absolute;left:252.3px;top:254px;width:7px;height:7px;border-radius:2px;border:1px solid #cfcfcf;background:#fff"></div>
<svg style="position:absolute;left:275.8px;top:253px" width="12" height="9" viewBox="0 0 12 9"><rect x="0.6" y="0.6" width="10" height="6.6" rx="0.9" fill="#fff" stroke="#a99d88" stroke-width="1.1"/><rect x="1.2" y="1.2" width="4" height="5.4" fill="#dcd2bf"/><path d="M2.7 1.5 L2.7 6.3" stroke="#c3b8a2" stroke-width="0.8"/><path d="M7.9 1.5 L9.4 3.7 L8.5 3.7 L8.5 6.2 L7.3 6.2 L7.3 3.7 L6.4 3.7 Z" fill="#3f3a2e"/></svg>
<div style="position:absolute;left:294px;top:252px;width:1px;height:13px;background:#e0e0e0"></div>
<div class="t" style="left:298.70px;top:254.00px;font-size:10.4px;letter-spacing:0.3px;transform:scaleX(0.8689);transform-origin:0 0;color:#0b8ee6;font-weight:normal;-webkit-text-stroke:0.25px #0b8ee6;">abilash-3823</div>
<div class="t" style="left:423.30px;top:254.00px;font-size:10.4px;letter-spacing:0.3px;transform:scaleX(0.8793);transform-origin:0 0;color:#1a1a1a;font-weight:normal;-webkit-text-stroke:0.25px #1a1a1a;width:250px;overflow:hidden">kmp-w12r2-1</div>
<div class="t" style="left:551.80px;top:254.00px;font-size:10.4px;letter-spacing:0.3px;transform:scaleX(0.8270);transform-origin:0 0;color:#1a1a1a;font-weight:normal;-webkit-text-stroke:0.25px #1a1a1a;">KMP-W12R2-1-CA</div>
<div class="t" style="left:654.70px;top:254.00px;font-size:10.4px;letter-spacing:0.3px;transform:scaleX(0.8442);transform-origin:0 0;color:#1a1a1a;font-weight:normal;-webkit-text-stroke:0.25px #1a1a1a;">Oct 13, 2019</div>
<div class="t" style="left:731.50px;top:254.00px;font-size:10.4px;letter-spacing:0.3px;transform:scaleX(0.8432);transform-origin:0 0;color:#1a1a1a;font-weight:normal;-webkit-text-stroke:0.25px #1a1a1a;">312</div>
<div class="t" style="left:762.10px;top:254.00px;font-size:10.4px;letter-spacing:0.3px;transform:scaleX(0.8902);transform-origin:0 0;color:#1a1a1a;font-weight:normal;-webkit-text-stroke:0.25px #1a1a1a;">1024</div>
<div class="t" style="left:810.70px;top:254.00px;font-size:10.4px;letter-spacing:0.3px;transform:scaleX(0.8275);transform-origin:0 0;color:#1a1a1a;font-weight:normal;-webkit-text-stroke:0.25px #1a1a1a;">SHA256</div>
<div class="t" style="left:914.10px;top:254.00px;font-size:10.4px;letter-spacing:0.3px;transform:scaleX(0.8132);transform-origin:0 0;color:#1a1a1a;font-weight:normal;-webkit-text-stroke:0.25px #1a1a1a;">NA</div>
<svg style="position:absolute;left:1092.5px;top:252px" width="14" height="10" viewBox="0 0 14 10" fill="none"><path d="M8.5 7.5 L1.8 7.5 A0.9 0.9 0 0 1 0.9 6.6 L0.9 1.6 A0.9 0.9 0 0 1 1.8 0.7 L10 0.7 A0.9 0.9 0 0 1 10.9 1.6 L10.9 3.5" stroke="#cfcfcf" stroke-width="1.1"/><path d="M3.8 6 L3.8 2.8 M2.8 3.8 L3.8 2.6 L4.8 3.8" stroke="#c4c4c4" stroke-width="0.9"/><path d="M6.3 2.6 L8 2.6 M7.3 2.6 L7 4.2" stroke="#cfcfcf" stroke-width="0.7"/><path d="M8.9 8.4 L11.6 5" stroke="#c4c4c4" stroke-width="1.4" stroke-linecap="round"/></svg>
<svg style="position:absolute;left:1121.5px;top:250px" width="13" height="13" viewBox="0 0 13 13" fill="none" stroke="#cdcdcd" stroke-width="0.9"><path d="M3.6 8.2 A4 4 0 1 1 9 3.5"/><path d="M2.8 2.8 L4.8 4.3 L3.4 5.8"/><rect x="3.2" y="5.6" width="9" height="6.3" rx="0.5" fill="#fff"/><path d="M3.2 7.5 L12.2 7.5"/><path d="M5.3 9.6 L6.5 9.6 M8.2 9.6 L10 9.6"/></svg>
<svg style="position:absolute;left:1150px;top:251px" width="15" height="12" viewBox="0 0 15 12"><path d="M5.6 2.6 L1.9 2.6 A1.2 1.2 0 0 0 0.7 3.8 L0.7 9.4 A1.2 1.2 0 0 0 1.9 10.6 L10.4 10.6 A1.2 1.2 0 0 0 11.6 9.4 L11.6 6" fill="none" stroke="#111" stroke-width="1.3"/><rect x="3" y="5" width="2.2" height="2.8" fill="#111"/><rect x="7" y="6" width="3" height="2.6" fill="#8a8a8a"/><path d="M9 2.6 C11.3 2.6 12.8 4 13.4 6.6" fill="none" stroke="#111" stroke-width="1.3"/><path d="M9.8 0.2 L6.3 2.5 L9.8 4.8 Z" fill="#111"/></svg>
<div style="position:absolute;left:244.5px;top:272.00px;width:946.0px;height:26.12px;background:#efefef"></div>
<div style="position:absolute;left:244.5px;top:297px;width:946.0px;height:2px;background:#f3f3f3"></div>
<div style="position:absolute;left:253px;top:281.0px;width:9px;height:9px;border-radius:2px;background:#1a8cff"></div><svg style="position:absolute;left:253px;top:281.0px" width="9" height="9" viewBox="0 0 9 9"><path d="M2 4.7 L3.8 6.5 L7.2 2.5" stroke="#fff" stroke-width="1.3" fill="none"/></svg>
<svg style="position:absolute;left:275.8px;top:280px" width="12" height="9" viewBox="0 0 12 9"><rect x="0.6" y="0.6" width="10" height="6.6" rx="0.9" fill="#fff" stroke="#a99d88" stroke-width="1.1"/><rect x="1.2" y="1.2" width="4" height="5.4" fill="#dcd2bf"/><path d="M2.7 1.5 L2.7 6.3" stroke="#c3b8a2" stroke-width="0.8"/><path d="M7.9 1.5 L9.4 3.7 L8.5 3.7 L8.5 6.2 L7.3 6.2 L7.3 3.7 L6.4 3.7 Z" fill="#3f3a2e"/></svg>
<div style="position:absolute;left:294px;top:279px;width:1px;height:13px;background:#e0e0e0"></div>
<div class="t" style="left:298.70px;top:281.00px;font-size:10.4px;letter-spacing:0.3px;transform:scaleX(0.9092);transform-origin:0 0;color:#0b8ee6;font-weight:normal;-webkit-text-stroke:0.25px #0b8ee6;">admincert.com</div>
<div class="t" style="left:423.30px;top:281.00px;font-size:10.4px;letter-spacing:0.3px;transform:scaleX(0.8793);transform-origin:0 0;color:#1a1a1a;font-weight:normal;-webkit-text-stroke:0.25px #1a1a1a;width:73px;overflow:hidden">192-185-98-66.websitewelcome.com</div>
<div class="t" style="left:654.70px;top:281.00px;font-size:10.4px;letter-spacing:0.3px;transform:scaleX(0.8442);transform-origin:0 0;color:#1a1a1a;font-weight:normal;-webkit-text-stroke:0.25px #1a1a1a;">Apr 6, 2019</div>
<div class="t" style="left:731.50px;top:281.00px;font-size:10.4px;letter-spacing:0.3px;transform:scaleX(0.8432);transform-origin:0 0;color:#1a1a1a;font-weight:normal;-webkit-text-stroke:0.25px #1a1a1a;">121</div>
<div class="t" style="left:762.10px;top:281.00px;font-size:10.4px;letter-spacing:0.3px;transform:scaleX(0.8902);transform-origin:0 0;color:#1a1a1a;font-weight:normal;-webkit-text-stroke:0.25px #1a1a1a;">4096</div>
<div class="t" style="left:810.70px;top:281.00px;font-size:10.4px;letter-spacing:0.3px;transform:scaleX(0.8275);transform-origin:0 0;color:#1a1a1a;font-weight:normal;-webkit-text-stroke:0.25px #1a1a1a;">SHA256</div>
<div class="t" style="left:914.10px;top:281.00px;font-size:10.4px;letter-spacing:0.3px;transform:scaleX(0.8132);transform-origin:0 0;color:#1a1a1a;font-weight:normal;-webkit-text-stroke:0.25px #1a1a1a;">NA</div>
<svg style="position:absolute;left:1092.5px;top:280px" width="14" height="10" viewBox="0 0 14 10" fill="none"><path d="M8.5 7.5 L1.8 7.5 A0.9 0.9 0 0 1 0.9 6.6 L0.9 1.6 A0.9 0.9 0 0 1 1.8 0.7 L10 0.7 A0.9 0.9 0 0 1 10.9 1.6 L10.9 3.5" stroke="#555" stroke-width="1.1"/><path d="M3.8 6 L3.8 2.8 M2.8 3.8 L3.8 2.6 L4.8 3.8" stroke="#222" stroke-width="0.9"/><path d="M6.3 2.6 L8 2.6 M7.3 2.6 L7 4.2" stroke="#555" stroke-width="0.7"/><path d="M8.9 8.4 L11.6 5" stroke="#222" stroke-width="1.4" stroke-linecap="round"/></svg>
<svg style="position:absolute;left:1121.5px;top:278px" width="13" height="13" viewBox="0 0 13 13" fill="none" stroke="#cdcdcd" stroke-width="0.9"><path d="M3.6 8.2 A4 4 0 1 1 9 3.5"/><path d="M2.8 2.8 L4.8 4.3 L3.4 5.8"/><rect x="3.2" y="5.6" width="9" height="6.3" rx="0.5" fill="#fff"/><path d="M3.2 7.5 L12.2 7.5"/><path d="M5.3 9.6 L6.5 9.6 M8.2 9.6 L10 9.6"/></svg>
<svg style="position:absolute;left:1150px;top:278px" width="15" height="12" viewBox="0 0 15 12"><path d="M5.6 2.6 L1.9 2.6 A1.2 1.2 0 0 0 0.7 3.8 L0.7 9.4 A1.2 1.2 0 0 0 1.9 10.6 L10.4 10.6 A1.2 1.2 0 0 0 11.6 9.4 L11.6 6" fill="none" stroke="#111" stroke-width="1.3"/><rect x="3" y="5" width="2.2" height="2.8" fill="#111"/><rect x="7" y="6" width="3" height="2.6" fill="#8a8a8a"/><path d="M9 2.6 C11.3 2.6 12.8 4 13.4 6.6" fill="none" stroke="#111" stroke-width="1.3"/><path d="M9.8 0.2 L6.3 2.5 L9.8 4.8 Z" fill="#111"/></svg>
<div style="position:absolute;left:244.5px;top:325px;width:946.0px;height:2px;background:#f3f3f3"></div>
<div style="position:absolute;left:252.3px;top:308px;width:7px;height:7px;border-radius:2px;border:1px solid #cfcfcf;background:#fff"></div>
<svg style="position:absolute;left:275.8px;top:308px" width="12" height="9" viewBox="0 0 12 9"><rect x="0.6" y="0.6" width="10" height="6.6" rx="0.9" fill="#fff" stroke="#a99d88" stroke-width="1.1"/><rect x="1.2" y="1.2" width="4" height="5.4" fill="#dcd2bf"/><path d="M2.7 1.5 L2.7 6.3" stroke="#c3b8a2" stroke-width="0.8"/><path d="M7.9 1.5 L9.4 3.7 L8.5 3.7 L8.5 6.2 L7.3 6.2 L7.3 3.7 L6.4 3.7 Z" fill="#3f3a2e"/></svg>
<div style="position:absolute;left:294px;top:306px;width:1px;height:13px;background:#e0e0e0"></div>
<div class="t" style="left:298.70px;top:308.00px;font-size:10.4px;letter-spacing:0.3px;transform:scaleX(0.9090);transform-origin:0 0;color:#0b8ee6;font-weight:normal;-webkit-text-stroke:0.25px #0b8ee6;">kmptesting.tk</div>
<div class="t" style="left:423.30px;top:308.00px;font-size:10.4px;letter-spacing:0.3px;transform:scaleX(0.8793);transform-origin:0 0;color:#1a1a1a;font-weight:normal;-webkit-text-stroke:0.25px #1a1a1a;width:250px;overflow:hidden">23.100.20.92</div>
<div class="t" style="left:620.60px;top:308.00px;font-size:10.4px;letter-spacing:0.3px;transform:scaleX(0.9065);transform-origin:0 0;color:#1a1a1a;font-weight:normal;-webkit-text-stroke:0.25px #1a1a1a;">thor...</div>
<div class="t" style="left:654.70px;top:308.00px;font-size:10.4px;letter-spacing:0.3px;transform:scaleX(0.8442);transform-origin:0 0;color:#1a1a1a;font-weight:normal;-webkit-text-stroke:0.25px #1a1a1a;">Mar 4, 2019</div>
<div class="t" style="left:731.50px;top:308.00px;font-size:10.4px;letter-spacing:0.3px;transform:scaleX(0.8432);transform-origin:0 0;color:#1a1a1a;font-weight:normal;-webkit-text-stroke:0.25px #1a1a1a;">88</div>
<div class="t" style="left:762.10px;top:308.00px;font-size:10.4px;letter-spacing:0.3px;transform:scaleX(0.8902);transform-origin:0 0;color:#1a1a1a;font-weight:normal;-webkit-text-stroke:0.25px #1a1a1a;">4096</div>
<div class="t" style="left:810.70px;top:308.00px;font-size:10.4px;letter-spacing:0.3px;transform:scaleX(0.8275);transform-origin:0 0;color:#1a1a1a;font-weight:normal;-webkit-text-stroke:0.25px #1a1a1a;">SHA256</div>
<div class="t" style="left:914.10px;top:308.00px;font-size:10.4px;letter-spacing:0.3px;transform:scaleX(0.8132);transform-origin:0 0;color:#1a1a1a;font-weight:normal;-webkit-text-stroke:0.25px #1a1a1a;">NA</div>
<svg style="position:absolute;left:1092.5px;top:307px" width="14" height="10" viewBox="0 0 14 10" fill="none"><path d="M8.5 7.5 L1.8 7.5 A0.9 0.9 0 0 1 0.9 6.6 L0.9 1.6 A0.9 0.9 0 0 1 1.8 0.7 L10 0.7 A0.9 0.9 0 0 1 10.9 1.6 L10.9 3.5" stroke="#555" stroke-width="1.1"/><path d="M3.8 6 L3.8 2.8 M2.8 3.8 L3.8 2.6 L4.8 3.8" stroke="#222" stroke-width="0.9"/><path d="M6.3 2.6 L8 2.6 M7.3 2.6 L7 4.2" stroke="#555" stroke-width="0.7"/><path d="M8.9 8.4 L11.6 5" stroke="#222" stroke-width="1.4" stroke-linecap="round"/></svg>
<svg style="position:absolute;left:1121.5px;top:305px" width="13" height="13" viewBox="0 0 13 13" fill="none" stroke="#cdcdcd" stroke-width="0.9"><path d="M3.6 8.2 A4 4 0 1 1 9 3.5"/><path d="M2.8 2.8 L4.8 4.3 L3.4 5.8"/><rect x="3.2" y="5.6" width="9" height="6.3" rx="0.5" fill="#fff"/><path d="M3.2 7.5 L12.2 7.5"/><path d="M5.3 9.6 L6.5 9.6 M8.2 9.6 L10 9.6"/></svg>
<svg style="position:absolute;left:1150px;top:305px" width="15" height="12" viewBox="0 0 15 12"><path d="M5.6 2.6 L1.9 2.6 A1.2 1.2 0 0 0 0.7 3.8 L0.7 9.4 A1.2 1.2 0 0 0 1.9 10.6 L10.4 10.6 A1.2 1.2 0 0 0 11.6 9.4 L11.6 6" fill="none" stroke="#111" stroke-width="1.3"/><rect x="3" y="5" width="2.2" height="2.8" fill="#111"/><rect x="7" y="6" width="3" height="2.6" fill="#8a8a8a"/><path d="M9 2.6 C11.3 2.6 12.8 4 13.4 6.6" fill="none" stroke="#111" stroke-width="1.3"/><path d="M9.8 0.2 L6.3 2.5 L9.8 4.8 Z" fill="#111"/></svg>
<div style="position:absolute;left:244.5px;top:352px;width:946.0px;height:2px;background:#f3f3f3"></div>
<div style="position:absolute;left:252.3px;top:335px;width:7px;height:7px;border-radius:2px;border:1px solid #cfcfcf;background:#fff"></div>
<svg style="position:absolute;left:275.8px;top:335px" width="12" height="9" viewBox="0 0 12 9"><rect x="0.6" y="0.6" width="10" height="6.6" rx="0.9" fill="#fff" stroke="#a99d88" stroke-width="1.1"/><rect x="1.2" y="1.2" width="4" height="5.4" fill="#dcd2bf"/><path d="M2.7 1.5 L2.7 6.3" stroke="#c3b8a2" stroke-width="0.8"/><path d="M7.9 1.5 L9.4 3.7 L8.5 3.7 L8.5 6.2 L7.3 6.2 L7.3 3.7 L6.4 3.7 Z" fill="#3f3a2e"/></svg>
<div style="position:absolute;left:294px;top:333px;width:1px;height:13px;background:#e0e0e0"></div>
<div class="t" style="left:298.70px;top:335.00px;font-size:10.4px;letter-spacing:0.3px;transform:scaleX(0.8558);transform-origin:0 0;color:#0b8ee6;font-weight:normal;-webkit-text-stroke:0.25px #0b8ee6;">abilash-3823.csez.zohoco...</div>
<div class="t" style="left:423.30px;top:335.00px;font-size:10.4px;letter-spacing:0.3px;transform:scaleX(0.8793);transform-origin:0 0;color:#1a1a1a;font-weight:normal;-webkit-text-stroke:0.25px #1a1a1a;width:250px;overflow:hidden">kmp-w12r2-1</div>
<div class="t" style="left:551.80px;top:335.00px;font-size:10.4px;letter-spacing:0.3px;transform:scaleX(0.8270);transform-origin:0 0;color:#1a1a1a;font-weight:normal;-webkit-text-stroke:0.25px #1a1a1a;">KMP-W12R2-1-CA</div>
<div class="t" style="left:654.70px;top:335.00px;font-size:10.4px;letter-spacing:0.3px;transform:scaleX(0.8442);transform-origin:0 0;color:#1a1a1a;font-weight:normal;-webkit-text-stroke:0.25px #1a1a1a;">Oct 13, 2019</div>
<div class="t" style="left:731.50px;top:335.00px;font-size:10.4px;letter-spacing:0.3px;transform:scaleX(0.8432);transform-origin:0 0;color:#1a1a1a;font-weight:normal;-webkit-text-stroke:0.25px #1a1a1a;">312</div>
<div class="t" style="left:762.10px;top:335.00px;font-size:10.4px;letter-spacing:0.3px;transform:scaleX(0.8902);transform-origin:0 0;color:#1a1a1a;font-weight:normal;-webkit-text-stroke:0.25px #1a1a1a;">2048</div>
<div class="t" style="left:810.70px;top:335.00px;font-size:10.4px;letter-spacing:0.3px;transform:scaleX(0.8275);transform-origin:0 0;color:#1a1a1a;font-weight:normal;-webkit-text-stroke:0.25px #1a1a1a;">SHA256</div>
<div class="t" style="left:914.10px;top:335.00px;font-size:10.4px;letter-spacing:0.3px;transform:scaleX(0.8132);transform-origin:0 0;color:#1a1a1a;font-weight:normal;-webkit-text-stroke:0.25px #1a1a1a;">NA</div>
<svg style="position:absolute;left:1092.5px;top:334px" width="14" height="10" viewBox="0 0 14 10" fill="none"><path d="M8.5 7.5 L1.8 7.5 A0.9 0.9 0 0 1 0.9 6.6 L0.9 1.6 A0.9 0.9 0 0 1 1.8 0.7 L10 0.7 A0.9 0.9 0 0 1 10.9 1.6 L10.9 3.5" stroke="#cfcfcf" stroke-width="1.1"/><path d="M3.8 6 L3.8 2.8 M2.8 3.8 L3.8 2.6 L4.8 3.8" stroke="#c4c4c4" stroke-width="0.9"/><path d="M6.3 2.6 L8 2.6 M7.3 2.6 L7 4.2" stroke="#cfcfcf" stroke-width="0.7"/><path d="M8.9 8.4 L11.6 5" stroke="#c4c4c4" stroke-width="1.4" stroke-linecap="round"/></svg>
<svg style="position:absolute;left:1121.5px;top:332px" width="13" height="13" viewBox="0 0 13 13" fill="none" stroke="#cdcdcd" stroke-width="0.9"><path d="M3.6 8.2 A4 4 0 1 1 9 3.5"/><path d="M2.8 2.8 L4.8 4.3 L3.4 5.8"/><rect x="3.2" y="5.6" width="9" height="6.3" rx="0.5" fill="#fff"/><path d="M3.2 7.5 L12.2 7.5"/><path d="M5.3 9.6 L6.5 9.6 M8.2 9.6 L10 9.6"/></svg>
<svg style="position:absolute;left:1150px;top:332px" width="15" height="12" viewBox="0 0 15 12"><path d="M5.6 2.6 L1.9 2.6 A1.2 1.2 0 0 0 0.7 3.8 L0.7 9.4 A1.2 1.2 0 0 0 1.9 10.6 L10.4 10.6 A1.2 1.2 0 0 0 11.6 9.4 L11.6 6" fill="none" stroke="#111" stroke-width="1.3"/><rect x="3" y="5" width="2.2" height="2.8" fill="#111"/><rect x="7" y="6" width="3" height="2.6" fill="#8a8a8a"/><path d="M9 2.6 C11.3 2.6 12.8 4 13.4 6.6" fill="none" stroke="#111" stroke-width="1.3"/><path d="M9.8 0.2 L6.3 2.5 L9.8 4.8 Z" fill="#111"/></svg>
<div style="position:absolute;left:244.5px;top:379px;width:946.0px;height:2px;background:#f3f3f3"></div>
<div style="position:absolute;left:252.3px;top:362px;width:7px;height:7px;border-radius:2px;border:1px solid #cfcfcf;background:#fff"></div>
<svg style="position:absolute;left:275.8px;top:362px" width="12" height="9" viewBox="0 0 12 9"><rect x="0.6" y="0.6" width="10" height="6.6" rx="0.9" fill="#fff" stroke="#a99d88" stroke-width="1.1"/><rect x="1.2" y="1.2" width="4" height="5.4" fill="#dcd2bf"/><path d="M2.7 1.5 L2.7 6.3" stroke="#c3b8a2" stroke-width="0.8"/><path d="M7.9 1.5 L9.4 3.7 L8.5 3.7 L8.5 6.2 L7.3 6.2 L7.3 3.7 L6.4 3.7 Z" fill="#3f3a2e"/></svg>
<div style="position:absolute;left:294px;top:360px;width:1px;height:13px;background:#e0e0e0"></div>
<div class="t" style="left:298.70px;top:362.00px;font-size:10.4px;letter-spacing:0.3px;transform:scaleX(0.8867);transform-origin:0 0;color:#0b8ee6;font-weight:normal;-webkit-text-stroke:0.25px #0b8ee6;">kmp.ca.com</div>
<div class="t" style="left:423.30px;top:362.00px;font-size:10.4px;letter-spacing:0.3px;transform:scaleX(0.8793);transform-origin:0 0;color:#1a1a1a;font-weight:normal;-webkit-text-stroke:0.25px #1a1a1a;width:250px;overflow:hidden">kmp-w12r2-1</div>
<div class="t" style="left:551.80px;top:362.00px;font-size:10.4px;letter-spacing:0.3px;transform:scaleX(0.8270);transform-origin:0 0;color:#1a1a1a;font-weight:normal;-webkit-text-stroke:0.25px #1a1a1a;">KMP-W12R2-1-CA</div>
<div class="t" style="left:654.70px;top:362.00px;font-size:10.4px;letter-spacing:0.3px;transform:scaleX(0.8442);transform-origin:0 0;color:#1a1a1a;font-weight:normal;-webkit-text-stroke:0.25px #1a1a1a;">Sep 7, 2019</div>
<div class="t" style="left:731.50px;top:362.00px;font-size:10.4px;letter-spacing:0.3px;transform:scaleX(0.8432);transform-origin:0 0;color:#1a1a1a;font-weight:normal;-webkit-text-stroke:0.25px #1a1a1a;">275</div>
<div class="t" style="left:762.10px;top:362.00px;font-size:10.4px;letter-spacing:0.3px;transform:scaleX(0.8902);transform-origin:0 0;color:#1a1a1a;font-weight:normal;-webkit-text-stroke:0.25px #1a1a1a;">2048</div>
<div class="t" style="left:810.70px;top:362.00px;font-size:10.4px;letter-spacing:0.3px;transform:scaleX(0.8275);transform-origin:0 0;color:#1a1a1a;font-weight:normal;-webkit-text-stroke:0.25px #1a1a1a;">SHA256</div>
<div class="t" style="left:914.10px;top:362.00px;font-size:10.4px;letter-spacing:0.3px;transform:scaleX(0.8132);transform-origin:0 0;color:#1a1a1a;font-weight:normal;-webkit-text-stroke:0.25px #1a1a1a;">NA</div>
<svg style="position:absolute;left:1092.5px;top:361px" width="14" height="10" viewBox="0 0 14 10" fill="none"><path d="M8.5 7.5 L1.8 7.5 A0.9 0.9 0 0 1 0.9 6.6 L0.9 1.6 A0.9 0.9 0 0 1 1.8 0.7 L10 0.7 A0.9 0.9 0 0 1 10.9 1.6 L10.9 3.5" stroke="#cfcfcf" stroke-width="1.1"/><path d="M3.8 6 L3.8 2.8 M2.8 3.8 L3.8 2.6 L4.8 3.8" stroke="#c4c4c4" stroke-width="0.9"/><path d="M6.3 2.6 L8 2.6 M7.3 2.6 L7 4.2" stroke="#cfcfcf" stroke-width="0.7"/><path d="M8.9 8.4 L11.6 5" stroke="#c4c4c4" stroke-width="1.4" stroke-linecap="round"/></svg>
<svg style="position:absolute;left:1121.5px;top:359px" width="13" height="13" viewBox="0 0 13 13" fill="none" stroke="#cdcdcd" stroke-width="0.9"><path d="M3.6 8.2 A4 4 0 1 1 9 3.5"/><path d="M2.8 2.8 L4.8 4.3 L3.4 5.8"/><rect x="3.2" y="5.6" width="9" height="6.3" rx="0.5" fill="#fff"/><path d="M3.2 7.5 L12.2 7.5"/><path d="M5.3 9.6 L6.5 9.6 M8.2 9.6 L10 9.6"/></svg>
<svg style="position:absolute;left:1150px;top:359px" width="15" height="12" viewBox="0 0 15 12"><path d="M5.6 2.6 L1.9 2.6 A1.2 1.2 0 0 0 0.7 3.8 L0.7 9.4 A1.2 1.2 0 0 0 1.9 10.6 L10.4 10.6 A1.2 1.2 0 0 0 11.6 9.4 L11.6 6" fill="none" stroke="#111" stroke-width="1.3"/><rect x="3" y="5" width="2.2" height="2.8" fill="#111"/><rect x="7" y="6" width="3" height="2.6" fill="#8a8a8a"/><path d="M9 2.6 C11.3 2.6 12.8 4 13.4 6.6" fill="none" stroke="#111" stroke-width="1.3"/><path d="M9.8 0.2 L6.3 2.5 L9.8 4.8 Z" fill="#111"/></svg>
<div style="position:absolute;left:244.5px;top:406px;width:946.0px;height:2px;background:#f3f3f3"></div>
<div style="position:absolute;left:252.3px;top:390px;width:7px;height:7px;border-radius:2px;border:1px solid #cfcfcf;background:#fff"></div>
<svg style="position:absolute;left:275.8px;top:389px" width="12" height="9" viewBox="0 0 12 9"><rect x="0.6" y="0.6" width="10" height="6.6" rx="0.9" fill="#fff" stroke="#a99d88" stroke-width="1.1"/><rect x="1.2" y="1.2" width="4" height="5.4" fill="#dcd2bf"/><path d="M2.7 1.5 L2.7 6.3" stroke="#c3b8a2" stroke-width="0.8"/><path d="M7.9 1.5 L9.4 3.7 L8.5 3.7 L8.5 6.2 L7.3 6.2 L7.3 3.7 L6.4 3.7 Z" fill="#3f3a2e"/></svg>
<div style="position:absolute;left:294px;top:388px;width:1px;height:13px;background:#e0e0e0"></div>
<div class="t" style="left:298.70px;top:389.00px;font-size:10.4px;letter-spacing:0.3px;transform:scaleX(0.8880);transform-origin:0 0;color:#0b8ee6;font-weight:normal;-webkit-text-stroke:0.25px #0b8ee6;">meod-w732-1.com</div>
<div class="t" style="left:423.30px;top:389.00px;font-size:10.4px;letter-spacing:0.3px;transform:scaleX(0.8793);transform-origin:0 0;color:#1a1a1a;font-weight:normal;-webkit-text-stroke:0.25px #1a1a1a;width:250px;overflow:hidden">kmp-w12r2-1</div>
<div class="t" style="left:551.80px;top:389.00px;font-size:10.4px;letter-spacing:0.3px;transform:scaleX(0.8270);transform-origin:0 0;color:#1a1a1a;font-weight:normal;-webkit-text-stroke:0.25px #1a1a1a;">KMP-W12R2-1-CA</div>
<div class="t" style="left:654.70px;top:389.00px;font-size:10.4px;letter-spacing:0.3px;transform:scaleX(0.8442);transform-origin:0 0;color:#1a1a1a;font-weight:normal;-webkit-text-stroke:0.25px #1a1a1a;">Sep 6, 2019</div>
<div class="t" style="left:731.50px;top:389.00px;font-size:10.4px;letter-spacing:0.3px;transform:scaleX(0.8432);transform-origin:0 0;color:#1a1a1a;font-weight:normal;-webkit-text-stroke:0.25px #1a1a1a;">274</div>
<div class="t" style="left:762.10px;top:389.00px;font-size:10.4px;letter-spacing:0.3px;transform:scaleX(0.8902);transform-origin:0 0;color:#1a1a1a;font-weight:normal;-webkit-text-stroke:0.25px #1a1a1a;">2048</div>
<div class="t" style="left:810.70px;top:389.00px;font-size:10.4px;letter-spacing:0.3px;transform:scaleX(0.8275);transform-origin:0 0;color:#1a1a1a;font-weight:normal;-webkit-text-stroke:0.25px #1a1a1a;">SHA256</div>
<div class="t" style="left:914.10px;top:389.00px;font-size:10.4px;letter-spacing:0.3px;transform:scaleX(0.8132);transform-origin:0 0;color:#1a1a1a;font-weight:normal;-webkit-text-stroke:0.25px #1a1a1a;">NA</div>
<svg style="position:absolute;left:1092.5px;top:388px" width="14" height="10" viewBox="0 0 14 10" fill="none"><path d="M8.5 7.5 L1.8 7.5 A0.9 0.9 0 0 1 0.9 6.6 L0.9 1.6 A0.9 0.9 0 0 1 1.8 0.7 L10 0.7 A0.9 0.9 0 0 1 10.9 1.6 L10.9 3.5" stroke="#cfcfcf" stroke-width="1.1"/><path d="M3.8 6 L3.8 2.8 M2.8 3.8 L3.8 2.6 L4.8 3.8" stroke="#c4c4c4" stroke-width="0.9"/><path d="M6.3 2.6 L8 2.6 M7.3 2.6 L7 4.2" stroke="#cfcfcf" stroke-width="0.7"/><path d="M8.9 8.4 L11.6 5" stroke="#c4c4c4" stroke-width="1.4" stroke-linecap="round"/></svg>
<svg style="position:absolute;left:1121.5px;top:386px" width="13" height="13" viewBox="0 0 13 13" fill="none" stroke="#cdcdcd" stroke-width="0.9"><path d="M3.6 8.2 A4 4 0 1 1 9 3.5"/><path d="M2.8 2.8 L4.8 4.3 L3.4 5.8"/><rect x="3.2" y="5.6" width="9" height="6.3" rx="0.5" fill="#fff"/><path d="M3.2 7.5 L12.2 7.5"/><path d="M5.3 9.6 L6.5 9.6 M8.2 9.6 L10 9.6"/></svg>
<svg style="position:absolute;left:1150px;top:386px" width="15" height="12" viewBox="0 0 15 12"><path d="M5.6 2.6 L1.9 2.6 A1.2 1.2 0 0 0 0.7 3.8 L0.7 9.4 A1.2 1.2 0 0 0 1.9 10.6 L10.4 10.6 A1.2 1.2 0 0 0 11.6 9.4 L11.6 6" fill="none" stroke="#111" stroke-width="1.3"/><rect x="3" y="5" width="2.2" height="2.8" fill="#111"/><rect x="7" y="6" width="3" height="2.6" fill="#8a8a8a"/><path d="M9 2.6 C11.3 2.6 12.8 4 13.4 6.6" fill="none" stroke="#111" stroke-width="1.3"/><path d="M9.8 0.2 L6.3 2.5 L9.8 4.8 Z" fill="#111"/></svg>
<div style="position:absolute;left:244.5px;top:433px;width:946.0px;height:2px;background:#f3f3f3"></div>
<div style="position:absolute;left:252.3px;top:417px;width:7px;height:7px;border-radius:2px;border:1px solid #cfcfcf;background:#fff"></div>
<svg style="position:absolute;left:275.8px;top:416px" width="12" height="9" viewBox="0 0 12 9"><rect x="0.6" y="0.6" width="10" height="6.6" rx="0.9" fill="#fff" stroke="#a99d88" stroke-width="1.1"/><rect x="1.2" y="1.2" width="4" height="5.4" fill="#dcd2bf"/><path d="M2.7 1.5 L2.7 6.3" stroke="#c3b8a2" stroke-width="0.8"/><path d="M7.9 1.5 L9.4 3.7 L8.5 3.7 L8.5 6.2 L7.3 6.2 L7.3 3.7 L6.4 3.7 Z" fill="#3f3a2e"/></svg>
<div style="position:absolute;left:294px;top:415px;width:1px;height:13px;background:#e0e0e0"></div>
<div class="t" style="left:298.70px;top:416.00px;font-size:10.4px;letter-spacing:0.3px;transform:scaleX(0.8739);transform-origin:0 0;color:#0b8ee6;font-weight:normal;-webkit-text-stroke:0.25px #0b8ee6;">meod-w732-1</div>
<div class="t" style="left:423.30px;top:416.00px;font-size:10.4px;letter-spacing:0.3px;transform:scaleX(0.8793);transform-origin:0 0;color:#1a1a1a;font-weight:normal;-webkit-text-stroke:0.25px #1a1a1a;width:250px;overflow:hidden">kmp-w12r2-1</div>
<div class="t" style="left:551.80px;top:416.00px;font-size:10.4px;letter-spacing:0.3px;transform:scaleX(0.8270);transform-origin:0 0;color:#1a1a1a;font-weight:normal;-webkit-text-stroke:0.25px #1a1a1a;">KMP-W12R2-1-CA</div>
<div class="t" style="left:654.70px;top:416.00px;font-size:10.4px;letter-spacing:0.3px;transform:scaleX(0.8442);transform-origin:0 0;color:#1a1a1a;font-weight:normal;-webkit-text-stroke:0.25px #1a1a1a;">Feb 15, 2020</div>
<div class="t" style="left:731.50px;top:416.00px;font-size:10.4px;letter-spacing:0.3px;transform:scaleX(0.8432);transform-origin:0 0;color:#1a1a1a;font-weight:normal;-webkit-text-stroke:0.25px #1a1a1a;">436</div>
<div class="t" style="left:762.10px;top:416.00px;font-size:10.4px;letter-spacing:0.3px;transform:scaleX(0.8902);transform-origin:0 0;color:#1a1a1a;font-weight:normal;-webkit-text-stroke:0.25px #1a1a1a;">2048</div>
<div class="t" style="left:810.70px;top:416.00px;font-size:10.4px;letter-spacing:0.3px;transform:scaleX(0.8275);transform-origin:0 0;color:#1a1a1a;font-weight:normal;-webkit-text-stroke:0.25px #1a1a1a;">SHA256</div>
<div class="t" style="left:914.10px;top:416.00px;font-size:10.4px;letter-spacing:0.3px;transform:scaleX(0.8132);transform-origin:0 0;color:#1a1a1a;font-weight:normal;-webkit-text-stroke:0.25px #1a1a1a;">NA</div>
<svg style="position:absolute;left:1092.5px;top:415px" width="14" height="10" viewBox="0 0 14 10" fill="none"><path d="M8.5 7.5 L1.8 7.5 A0.9 0.9 0 0 1 0.9 6.6 L0.9 1.6 A0.9 0.9 0 0 1 1.8 0.7 L10 0.7 A0.9 0.9 0 0 1 10.9 1.6 L10.9 3.5" stroke="#cfcfcf" stroke-width="1.1"/><path d="M3.8 6 L3.8 2.8 M2.8 3.8 L3.8 2.6 L4.8 3.8" stroke="#c4c4c4" stroke-width="0.9"/><path d="M6.3 2.6 L8 2.6 M7.3 2.6 L7 4.2" stroke="#cfcfcf" stroke-width="0.7"/><path d="M8.9 8.4 L11.6 5" stroke="#c4c4c4" stroke-width="1.4" stroke-linecap="round"/></svg>
<svg style="position:absolute;left:1121.5px;top:413px" width="13" height="13" viewBox="0 0 13 13" fill="none" stroke="#cdcdcd" stroke-width="0.9"><path d="M3.6 8.2 A4 4 0 1 1 9 3.5"/><path d="M2.8 2.8 L4.8 4.3 L3.4 5.8"/><rect x="3.2" y="5.6" width="9" height="6.3" rx="0.5" fill="#fff"/><path d="M3.2 7.5 L12.2 7.5"/><path d="M5.3 9.6 L6.5 9.6 M8.2 9.6 L10 9.6"/></svg>
<svg style="position:absolute;left:1150px;top:414px" width="15" height="12" viewBox="0 0 15 12"><path d="M5.6 2.6 L1.9 2.6 A1.2 1.2 0 0 0 0.7 3.8 L0.7 9.4 A1.2 1.2 0 0 0 1.9 10.6 L10.4 10.6 A1.2 1.2 0 0 0 11.6 9.4 L11.6 6" fill="none" stroke="#111" stroke-width="1.3"/><rect x="3" y="5" width="2.2" height="2.8" fill="#111"/><rect x="7" y="6" width="3" height="2.6" fill="#8a8a8a"/><path d="M9 2.6 C11.3 2.6 12.8 4 13.4 6.6" fill="none" stroke="#111" stroke-width="1.3"/><path d="M9.8 0.2 L6.3 2.5 L9.8 4.8 Z" fill="#111"/></svg>
<div style="position:absolute;left:244.5px;top:460px;width:946.0px;height:2px;background:#f3f3f3"></div>
<div style="position:absolute;left:252.3px;top:444px;width:7px;height:7px;border-radius:2px;border:1px solid #cfcfcf;background:#fff"></div>
<svg style="position:absolute;left:275.8px;top:443px" width="12" height="9" viewBox="0 0 12 9"><rect x="0.6" y="0.6" width="10" height="6.6" rx="0.9" fill="#fff" stroke="#a99d88" stroke-width="1.1"/><rect x="1.2" y="1.2" width="4" height="5.4" fill="#dcd2bf"/><path d="M2.7 1.5 L2.7 6.3" stroke="#c3b8a2" stroke-width="0.8"/><path d="M7.9 1.5 L9.4 3.7 L8.5 3.7 L8.5 6.2 L7.3 6.2 L7.3 3.7 L6.4 3.7 Z" fill="#3f3a2e"/></svg>
<div style="position:absolute;left:294px;top:442px;width:1px;height:13px;background:#e0e0e0"></div>
<div class="t" style="left:298.70px;top:444.00px;font-size:10.4px;letter-spacing:0.3px;transform:scaleX(0.8657);transform-origin:0 0;color:#0b8ee6;font-weight:normal;-webkit-text-stroke:0.25px #0b8ee6;">passwords.isagenixcorp....</div>
<div class="t" style="left:423.30px;top:444.00px;font-size:10.4px;letter-spacing:0.3px;transform:scaleX(0.8793);transform-origin:0 0;color:#1a1a1a;font-weight:normal;-webkit-text-stroke:0.25px #1a1a1a;width:250px;overflow:hidden">kmp-w12r2-1</div>
<div class="t" style="left:551.80px;top:444.00px;font-size:10.4px;letter-spacing:0.3px;transform:scaleX(0.8270);transform-origin:0 0;color:#1a1a1a;font-weight:normal;-webkit-text-stroke:0.25px #1a1a1a;">KMP-W12R2-1-CA</div>
<div class="t" style="left:654.70px;top:444.00px;font-size:10.4px;letter-spacing:0.3px;transform:scaleX(0.8442);transform-origin:0 0;color:#1a1a1a;font-weight:normal;-webkit-text-stroke:0.25px #1a1a1a;">Jun 22, 2019</div>
<div class="t" style="left:731.50px;top:444.00px;font-size:10.4px;letter-spacing:0.3px;transform:scaleX(0.8432);transform-origin:0 0;color:#1a1a1a;font-weight:normal;-webkit-text-stroke:0.25px #1a1a1a;">198</div>
<div class="t" style="left:762.10px;top:444.00px;font-size:10.4px;letter-spacing:0.3px;transform:scaleX(0.8902);transform-origin:0 0;color:#1a1a1a;font-weight:normal;-webkit-text-stroke:0.25px #1a1a1a;">2048</div>
<div class="t" style="left:810.70px;top:444.00px;font-size:10.4px;letter-spacing:0.3px;transform:scaleX(0.8275);transform-origin:0 0;color:#1a1a1a;font-weight:normal;-webkit-text-stroke:0.25px #1a1a1a;">SHA256</div>
<div class="t" style="left:914.10px;top:444.00px;font-size:10.4px;letter-spacing:0.3px;transform:scaleX(0.8132);transform-origin:0 0;color:#1a1a1a;font-weight:normal;-webkit-text-stroke:0.25px #1a1a1a;">NA</div>
<svg style="position:absolute;left:1092.5px;top:442px" width="14" height="10" viewBox="0 0 14 10" fill="none"><path d="M8.5 7.5 L1.8 7.5 A0.9 0.9 0 0 1 0.9 6.6 L0.9 1.6 A0.9 0.9 0 0 1 1.8 0.7 L10 0.7 A0.9 0.9 0 0 1 10.9 1.6 L10.9 3.5" stroke="#cfcfcf" stroke-width="1.1"/><path d="M3.8 6 L3.8 2.8 M2.8 3.8 L3.8 2.6 L4.8 3.8" stroke="#c4c4c4" stroke-width="0.9"/><path d="M6.3 2.6 L8 2.6 M7.3 2.6 L7 4.2" stroke="#cfcfcf" stroke-width="0.7"/><path d="M8.9 8.4 L11.6 5" stroke="#c4c4c4" stroke-width="1.4" stroke-linecap="round"/></svg>
<svg style="position:absolute;left:1121.5px;top:440px" width="13" height="13" viewBox="0 0 13 13" fill="none" stroke="#cdcdcd" stroke-width="0.9"><path d="M3.6 8.2 A4 4 0 1 1 9 3.5"/><path d="M2.8 2.8 L4.8 4.3 L3.4 5.8"/><rect x="3.2" y="5.6" width="9" height="6.3" rx="0.5" fill="#fff"/><path d="M3.2 7.5 L12.2 7.5"/><path d="M5.3 9.6 L6.5 9.6 M8.2 9.6 L10 9.6"/></svg>
<svg style="position:absolute;left:1150px;top:441px" width="15" height="12" viewBox="0 0 15 12"><path d="M5.6 2.6 L1.9 2.6 A1.2 1.2 0 0 0 0.7 3.8 L0.7 9.4 A1.2 1.2 0 0 0 1.9 10.6 L10.4 10.6 A1.2 1.2 0 0 0 11.6 9.4 L11.6 6" fill="none" stroke="#111" stroke-width="1.3"/><rect x="3" y="5" width="2.2" height="2.8" fill="#111"/><rect x="7" y="6" width="3" height="2.6" fill="#8a8a8a"/><path d="M9 2.6 C11.3 2.6 12.8 4 13.4 6.6" fill="none" stroke="#111" stroke-width="1.3"/><path d="M9.8 0.2 L6.3 2.5 L9.8 4.8 Z" fill="#111"/></svg>
<div style="position:absolute;left:244.5px;top:487px;width:946.0px;height:2px;background:#f3f3f3"></div>
<div style="position:absolute;left:252.3px;top:471px;width:7px;height:7px;border-radius:2px;border:1px solid #cfcfcf;background:#fff"></div>
<svg style="position:absolute;left:275.8px;top:470px" width="12" height="9" viewBox="0 0 12 9"><rect x="0.6" y="0.6" width="10" height="6.6" rx="0.9" fill="#fff" stroke="#a99d88" stroke-width="1.1"/><rect x="1.2" y="1.2" width="4" height="5.4" fill="#dcd2bf"/><path d="M2.7 1.5 L2.7 6.3" stroke="#c3b8a2" stroke-width="0.8"/><path d="M7.9 1.5 L9.4 3.7 L8.5 3.7 L8.5 6.2 L7.3 6.2 L7.3 3.7 L6.4 3.7 Z" fill="#3f3a2e"/></svg>
<div style="position:absolute;left:294px;top:469px;width:1px;height:13px;background:#e0e0e0"></div>
<div class="t" style="left:298.70px;top:471.00px;font-size:10.4px;letter-spacing:0.3px;transform:scaleX(0.9005);transform-origin:0 0;color:#0b8ee6;font-weight:normal;-webkit-text-stroke:0.25px #0b8ee6;">*.keymanager.com</div>
<div class="t" style="left:423.30px;top:471.00px;font-size:10.4px;letter-spacing:0.3px;transform:scaleX(0.8793);transform-origin:0 0;color:#1a1a1a;font-weight:normal;-webkit-text-stroke:0.25px #1a1a1a;width:250px;overflow:hidden">kmp-w12r2-1</div>
<div class="t" style="left:551.80px;top:471.00px;font-size:10.4px;letter-spacing:0.3px;transform:scaleX(0.8270);transform-origin:0 0;color:#1a1a1a;font-weight:normal;-webkit-text-stroke:0.25px #1a1a1a;">KMP-W12R2-1-CA</div>
<div class="t" style="left:654.70px;top:471.00px;font-size:10.4px;letter-spacing:0.3px;transform:scaleX(0.8442);transform-origin:0 0;color:#1a1a1a;font-weight:normal;-webkit-text-stroke:0.25px #1a1a1a;">Jun 19, 2019</div>
<div class="t" style="left:731.50px;top:471.00px;font-size:10.4px;letter-spacing:0.3px;transform:scaleX(0.8432);transform-origin:0 0;color:#1a1a1a;font-weight:normal;-webkit-text-stroke:0.25px #1a1a1a;">195</div>
<div class="t" style="left:762.10px;top:471.00px;font-size:10.4px;letter-spacing:0.3px;transform:scaleX(0.8902);transform-origin:0 0;color:#1a1a1a;font-weight:normal;-webkit-text-stroke:0.25px #1a1a1a;">2048</div>
<div class="t" style="left:810.70px;top:471.00px;font-size:10.4px;letter-spacing:0.3px;transform:scaleX(0.8275);transform-origin:0 0;color:#1a1a1a;font-weight:normal;-webkit-text-stroke:0.25px #1a1a1a;">SHA256</div>
<div class="t" style="left:914.10px;top:471.00px;font-size:10.4px;letter-spacing:0.3px;transform:scaleX(0.8132);transform-origin:0 0;color:#1a1a1a;font-weight:normal;-webkit-text-stroke:0.25px #1a1a1a;">NA</div>
<svg style="position:absolute;left:1092.5px;top:469px" width="14" height="10" viewBox="0 0 14 10" fill="none"><path d="M8.5 7.5 L1.8 7.5 A0.9 0.9 0 0 1 0.9 6.6 L0.9 1.6 A0.9 0.9 0 0 1 1.8 0.7 L10 0.7 A0.9 0.9 0 0 1 10.9 1.6 L10.9 3.5" stroke="#cfcfcf" stroke-width="1.1"/><path d="M3.8 6 L3.8 2.8 M2.8 3.8 L3.8 2.6 L4.8 3.8" stroke="#c4c4c4" stroke-width="0.9"/><path d="M6.3 2.6 L8 2.6 M7.3 2.6 L7 4.2" stroke="#cfcfcf" stroke-width="0.7"/><path d="M8.9 8.4 L11.6 5" stroke="#c4c4c4" stroke-width="1.4" stroke-linecap="round"/></svg>
<svg style="position:absolute;left:1121.5px;top:467px" width="13" height="13" viewBox="0 0 13 13" fill="none" stroke="#cdcdcd" stroke-width="0.9"><path d="M3.6 8.2 A4 4 0 1 1 9 3.5"/><path d="M2.8 2.8 L4.8 4.3 L3.4 5.8"/><rect x="3.2" y="5.6" width="9" height="6.3" rx="0.5" fill="#fff"/><path d="M3.2 7.5 L12.2 7.5"/><path d="M5.3 9.6 L6.5 9.6 M8.2 9.6 L10 9.6"/></svg>
<svg style="position:absolute;left:1150px;top:468px" width="15" height="12" viewBox="0 0 15 12"><path d="M5.6 2.6 L1.9 2.6 A1.2 1.2 0 0 0 0.7 3.8 L0.7 9.4 A1.2 1.2 0 0 0 1.9 10.6 L10.4 10.6 A1.2 1.2 0 0 0 11.6 9.4 L11.6 6" fill="none" stroke="#111" stroke-width="1.3"/><rect x="3" y="5" width="2.2" height="2.8" fill="#111"/><rect x="7" y="6" width="3" height="2.6" fill="#8a8a8a"/><path d="M9 2.6 C11.3 2.6 12.8 4 13.4 6.6" fill="none" stroke="#111" stroke-width="1.3"/><path d="M9.8 0.2 L6.3 2.5 L9.8 4.8 Z" fill="#111"/></svg>
<div style="position:absolute;left:244.5px;top:514px;width:946.0px;height:2px;background:#f3f3f3"></div>
<div style="position:absolute;left:252.3px;top:498px;width:7px;height:7px;border-radius:2px;border:1px solid #cfcfcf;background:#fff"></div>
<svg style="position:absolute;left:275.8px;top:498px" width="12" height="9" viewBox="0 0 12 9"><rect x="0.6" y="0.6" width="10" height="6.6" rx="0.9" fill="#fff" stroke="#a99d88" stroke-width="1.1"/><rect x="1.2" y="1.2" width="4" height="5.4" fill="#dcd2bf"/><path d="M2.7 1.5 L2.7 6.3" stroke="#c3b8a2" stroke-width="0.8"/><path d="M7.9 1.5 L9.4 3.7 L8.5 3.7 L8.5 6.2 L7.3 6.2 L7.3 3.7 L6.4 3.7 Z" fill="#3f3a2e"/></svg>
<div style="position:absolute;left:294px;top:496px;width:1px;height:13px;background:#e0e0e0"></div>
<div class="t" style="left:298.70px;top:498.00px;font-size:10.4px;letter-spacing:0.3px;transform:scaleX(0.8672);transform-origin:0 0;color:#0b8ee6;font-weight:normal;-webkit-text-stroke:0.25px #0b8ee6;">Sivaraman Nagarajan</div>
<div class="t" style="left:423.30px;top:498.00px;font-size:10.4px;letter-spacing:0.3px;transform:scaleX(0.8793);transform-origin:0 0;color:#1a1a1a;font-weight:normal;-webkit-text-stroke:0.25px #1a1a1a;width:250px;overflow:hidden">kmp-w12r2-1</div>
<div class="t" style="left:551.80px;top:498.00px;font-size:10.4px;letter-spacing:0.3px;transform:scaleX(0.8270);transform-origin:0 0;color:#1a1a1a;font-weight:normal;-webkit-text-stroke:0.25px #1a1a1a;">KMP-W12R2-1-CA</div>
<div class="t" style="left:654.70px;top:498.00px;font-size:10.4px;letter-spacing:0.3px;transform:scaleX(0.8442);transform-origin:0 0;color:#1a1a1a;font-weight:normal;-webkit-text-stroke:0.25px #1a1a1a;">Feb 19, 2019</div>
<div class="t" style="left:731.50px;top:498.00px;font-size:10.4px;letter-spacing:0.3px;transform:scaleX(0.8432);transform-origin:0 0;color:#1a1a1a;font-weight:normal;-webkit-text-stroke:0.25px #1a1a1a;">75</div>
<div class="t" style="left:762.10px;top:498.00px;font-size:10.4px;letter-spacing:0.3px;transform:scaleX(0.8902);transform-origin:0 0;color:#1a1a1a;font-weight:normal;-webkit-text-stroke:0.25px #1a1a1a;">2048</div>
<div class="t" style="left:810.70px;top:498.00px;font-size:10.4px;letter-spacing:0.3px;transform:scaleX(0.8275);transform-origin:0 0;color:#1a1a1a;font-weight:normal;-webkit-text-stroke:0.25px #1a1a1a;">SHA256</div>
<div class="t" style="left:914.10px;top:498.00px;font-size:10.4px;letter-spacing:0.3px;transform:scaleX(0.8132);transform-origin:0 0;color:#1a1a1a;font-weight:normal;-webkit-text-stroke:0.25px #1a1a1a;">NA</div>
<svg style="position:absolute;left:1092.5px;top:496px" width="14" height="10" viewBox="0 0 14 10" fill="none"><path d="M8.5 7.5 L1.8 7.5 A0.9 0.9 0 0 1 0.9 6.6 L0.9 1.6 A0.9 0.9 0 0 1 1.8 0.7 L10 0.7 A0.9 0.9 0 0 1 10.9 1.6 L10.9 3.5" stroke="#cfcfcf" stroke-width="1.1"/><path d="M3.8 6 L3.8 2.8 M2.8 3.8 L3.8 2.6 L4.8 3.8" stroke="#c4c4c4" stroke-width="0.9"/><path d="M6.3 2.6 L8 2.6 M7.3 2.6 L7 4.2" stroke="#cfcfcf" stroke-width="0.7"/><path d="M8.9 8.4 L11.6 5" stroke="#c4c4c4" stroke-width="1.4" stroke-linecap="round"/></svg>
<svg style="position:absolute;left:1121.5px;top:494px" width="13" height="13" viewBox="0 0 13 13" fill="none" stroke="#cdcdcd" stroke-width="0.9"><path d="M3.6 8.2 A4 4 0 1 1 9 3.5"/><path d="M2.8 2.8 L4.8 4.3 L3.4 5.8"/><rect x="3.2" y="5.6" width="9" height="6.3" rx="0.5" fill="#fff"/><path d="M3.2 7.5 L12.2 7.5"/><path d="M5.3 9.6 L6.5 9.6 M8.2 9.6 L10 9.6"/></svg>
<svg style="position:absolute;left:1150px;top:495px" width="15" height="12" viewBox="0 0 15 12"><path d="M5.6 2.6 L1.9 2.6 A1.2 1.2 0 0 0 0.7 3.8 L0.7 9.4 A1.2 1.2 0 0 0 1.9 10.6 L10.4 10.6 A1.2 1.2 0 0 0 11.6 9.4 L11.6 6" fill="none" stroke="#111" stroke-width="1.3"/><rect x="3" y="5" width="2.2" height="2.8" fill="#111"/><rect x="7" y="6" width="3" height="2.6" fill="#8a8a8a"/><path d="M9 2.6 C11.3 2.6 12.8 4 13.4 6.6" fill="none" stroke="#111" stroke-width="1.3"/><path d="M9.8 0.2 L6.3 2.5 L9.8 4.8 Z" fill="#111"/></svg>
<div style="position:absolute;left:244.5px;top:542px;width:946.0px;height:2px;background:#f3f3f3"></div>
<div style="position:absolute;left:252.3px;top:525px;width:7px;height:7px;border-radius:2px;border:1px solid #cfcfcf;background:#fff"></div>
<svg style="position:absolute;left:275.8px;top:525px" width="12" height="9" viewBox="0 0 12 9"><rect x="0.6" y="0.6" width="10" height="6.6" rx="0.9" fill="#fff" stroke="#a99d88" stroke-width="1.1"/><rect x="1.2" y="1.2" width="4" height="5.4" fill="#dcd2bf"/><path d="M2.7 1.5 L2.7 6.3" stroke="#c3b8a2" stroke-width="0.8"/><path d="M7.9 1.5 L9.4 3.7 L8.5 3.7 L8.5 6.2 L7.3 6.2 L7.3 3.7 L6.4 3.7 Z" fill="#3f3a2e"/></svg>
<div style="position:absolute;left:294px;top:523px;width:1px;height:13px;background:#e0e0e0"></div>
<div class="t" style="left:298.70px;top:525.00px;font-size:10.4px;letter-spacing:0.3px;transform:scaleX(0.8594);transform-origin:0 0;color:#0b8ee6;font-weight:normal;-webkit-text-stroke:0.25px #0b8ee6;">dc01.ss64.com</div>
<div class="t" style="left:423.30px;top:525.00px;font-size:10.4px;letter-spacing:0.3px;transform:scaleX(0.8793);transform-origin:0 0;color:#1a1a1a;font-weight:normal;-webkit-text-stroke:0.25px #1a1a1a;width:250px;overflow:hidden">kmp-w12r2-1</div>
<div class="t" style="left:551.80px;top:525.00px;font-size:10.4px;letter-spacing:0.3px;transform:scaleX(0.8270);transform-origin:0 0;color:#1a1a1a;font-weight:normal;-webkit-text-stroke:0.25px #1a1a1a;">KMP-W12R2-1-CA</div>
<div class="t" style="left:654.70px;top:525.00px;font-size:10.4px;letter-spacing:0.3px;transform:scaleX(0.8442);transform-origin:0 0;color:#1a1a1a;font-weight:normal;-webkit-text-stroke:0.25px #1a1a1a;">May 9, 2019</div>
<div class="t" style="left:731.50px;top:525.00px;font-size:10.4px;letter-spacing:0.3px;transform:scaleX(0.8432);transform-origin:0 0;color:#1a1a1a;font-weight:normal;-webkit-text-stroke:0.25px #1a1a1a;">154</div>
<div class="t" style="left:762.10px;top:525.00px;font-size:10.4px;letter-spacing:0.3px;transform:scaleX(0.8902);transform-origin:0 0;color:#1a1a1a;font-weight:normal;-webkit-text-stroke:0.25px #1a1a1a;">1024</div>
<div class="t" style="left:810.70px;top:525.00px;font-size:10.4px;letter-spacing:0.3px;transform:scaleX(0.8275);transform-origin:0 0;color:#1a1a1a;font-weight:normal;-webkit-text-stroke:0.25px #1a1a1a;">SHA256</div>
<div class="t" style="left:914.10px;top:525.00px;font-size:10.4px;letter-spacing:0.3px;transform:scaleX(0.8132);transform-origin:0 0;color:#1a1a1a;font-weight:normal;-webkit-text-stroke:0.25px #1a1a1a;">NA</div>
<svg style="position:absolute;left:1092.5px;top:524px" width="14" height="10" viewBox="0 0 14 10" fill="none"><path d="M8.5 7.5 L1.8 7.5 A0.9 0.9 0 0 1 0.9 6.6 L0.9 1.6 A0.9 0.9 0 0 1 1.8 0.7 L10 0.7 A0.9 0.9 0 0 1 10.9 1.6 L10.9 3.5" stroke="#cfcfcf" stroke-width="1.1"/><path d="M3.8 6 L3.8 2.8 M2.8 3.8 L3.8 2.6 L4.8 3.8" stroke="#c4c4c4" stroke-width="0.9"/><path d="M6.3 2.6 L8 2.6 M7.3 2.6 L7 4.2" stroke="#cfcfcf" stroke-width="0.7"/><path d="M8.9 8.4 L11.6 5" stroke="#c4c4c4" stroke-width="1.4" stroke-linecap="round"/></svg>
<svg style="position:absolute;left:1121.5px;top:522px" width="13" height="13" viewBox="0 0 13 13" fill="none" stroke="#cdcdcd" stroke-width="0.9"><path d="M3.6 8.2 A4 4 0 1 1 9 3.5"/><path d="M2.8 2.8 L4.8 4.3 L3.4 5.8"/><rect x="3.2" y="5.6" width="9" height="6.3" rx="0.5" fill="#fff"/><path d="M3.2 7.5 L12.2 7.5"/><path d="M5.3 9.6 L6.5 9.6 M8.2 9.6 L10 9.6"/></svg>
<svg style="position:absolute;left:1150px;top:522px" width="15" height="12" viewBox="0 0 15 12"><path d="M5.6 2.6 L1.9 2.6 A1.2 1.2 0 0 0 0.7 3.8 L0.7 9.4 A1.2 1.2 0 0 0 1.9 10.6 L10.4 10.6 A1.2 1.2 0 0 0 11.6 9.4 L11.6 6" fill="none" stroke="#111" stroke-width="1.3"/><rect x="3" y="5" width="2.2" height="2.8" fill="#111"/><rect x="7" y="6" width="3" height="2.6" fill="#8a8a8a"/><path d="M9 2.6 C11.3 2.6 12.8 4 13.4 6.6" fill="none" stroke="#111" stroke-width="1.3"/><path d="M9.8 0.2 L6.3 2.5 L9.8 4.8 Z" fill="#111"/></svg>
<div style="position:absolute;left:244.5px;top:569px;width:946.0px;height:2px;background:#f3f3f3"></div>
<div style="position:absolute;left:252.3px;top:552px;width:7px;height:7px;border-radius:2px;border:1px solid #cfcfcf;background:#fff"></div>
<svg style="position:absolute;left:275.8px;top:552px" width="12" height="9" viewBox="0 0 12 9"><rect x="0.6" y="0.6" width="10" height="6.6" rx="0.9" fill="#fff" stroke="#a99d88" stroke-width="1.1"/><rect x="1.2" y="1.2" width="4" height="5.4" fill="#dcd2bf"/><path d="M2.7 1.5 L2.7 6.3" stroke="#c3b8a2" stroke-width="0.8"/><path d="M7.9 1.5 L9.4 3.7 L8.5 3.7 L8.5 6.2 L7.3 6.2 L7.3 3.7 L6.4 3.7 Z" fill="#3f3a2e"/></svg>
<div style="position:absolute;left:294px;top:550px;width:1px;height:13px;background:#e0e0e0"></div>
<div class="t" style="left:298.70px;top:552.00px;font-size:10.4px;letter-spacing:0.3px;transform:scaleX(0.8942);transform-origin:0 0;color:#0b8ee6;font-weight:normal;-webkit-text-stroke:0.25px #0b8ee6;">demo.keymanager.com</div>
<div class="t" style="left:423.30px;top:552.00px;font-size:10.4px;letter-spacing:0.3px;transform:scaleX(0.8793);transform-origin:0 0;color:#1a1a1a;font-weight:normal;-webkit-text-stroke:0.25px #1a1a1a;width:250px;overflow:hidden">kmp-w12r2-1</div>
<div class="t" style="left:551.80px;top:552.00px;font-size:10.4px;letter-spacing:0.3px;transform:scaleX(0.8270);transform-origin:0 0;color:#1a1a1a;font-weight:normal;-webkit-text-stroke:0.25px #1a1a1a;">KMP-W12R2-1-CA</div>
<div class="t" style="left:654.70px;top:552.00px;font-size:10.4px;letter-spacing:0.3px;transform:scaleX(0.8442);transform-origin:0 0;color:#1a1a1a;font-weight:normal;-webkit-text-stroke:0.25px #1a1a1a;">Feb 19, 2020</div>
<div class="t" style="left:731.50px;top:552.00px;font-size:10.4px;letter-spacing:0.3px;transform:scaleX(0.8432);transform-origin:0 0;color:#1a1a1a;font-weight:normal;-webkit-text-stroke:0.25px #1a1a1a;">440</div>
<div class="t" style="left:762.10px;top:552.00px;font-size:10.4px;letter-spacing:0.3px;transform:scaleX(0.8902);transform-origin:0 0;color:#1a1a1a;font-weight:normal;-webkit-text-stroke:0.25px #1a1a1a;">2048</div>
<div class="t" style="left:810.70px;top:552.00px;font-size:10.4px;letter-spacing:0.3px;transform:scaleX(0.8275);transform-origin:0 0;color:#1a1a1a;font-weight:normal;-webkit-text-stroke:0.25px #1a1a1a;">SHA256</div>
<div class="t" style="left:914.10px;top:552.00px;font-size:10.4px;letter-spacing:0.3px;transform:scaleX(0.8132);transform-origin:0 0;color:#1a1a1a;font-weight:normal;-webkit-text-stroke:0.25px #1a1a1a;">NA</div>
<svg style="position:absolute;left:1092.5px;top:551px" width="14" height="10" viewBox="0 0 14 10" fill="none"><path d="M8.5 7.5 L1.8 7.5 A0.9 0.9 0 0 1 0.9 6.6 L0.9 1.6 A0.9 0.9 0 0 1 1.8 0.7 L10 0.7 A0.9 0.9 0 0 1 10.9 1.6 L10.9 3.5" stroke="#cfcfcf" stroke-width="1.1"/><path d="M3.8 6 L3.8 2.8 M2.8 3.8 L3.8 2.6 L4.8 3.8" stroke="#c4c4c4" stroke-width="0.9"/><path d="M6.3 2.6 L8 2.6 M7.3 2.6 L7 4.2" stroke="#cfcfcf" stroke-width="0.7"/><path d="M8.9 8.4 L11.6 5" stroke="#c4c4c4" stroke-width="1.4" stroke-linecap="round"/></svg>
<svg style="position:absolute;left:1121.5px;top:549px" width="13" height="13" viewBox="0 0 13 13" fill="none" stroke="#cdcdcd" stroke-width="0.9"><path d="M3.6 8.2 A4 4 0 1 1 9 3.5"/><path d="M2.8 2.8 L4.8 4.3 L3.4 5.8"/><rect x="3.2" y="5.6" width="9" height="6.3" rx="0.5" fill="#fff"/><path d="M3.2 7.5 L12.2 7.5"/><path d="M5.3 9.6 L6.5 9.6 M8.2 9.6 L10 9.6"/></svg>
<svg style="position:absolute;left:1150px;top:549px" width="15" height="12" viewBox="0 0 15 12"><path d="M5.6 2.6 L1.9 2.6 A1.2 1.2 0 0 0 0.7 3.8 L0.7 9.4 A1.2 1.2 0 0 0 1.9 10.6 L10.4 10.6 A1.2 1.2 0 0 0 11.6 9.4 L11.6 6" fill="none" stroke="#111" stroke-width="1.3"/><rect x="3" y="5" width="2.2" height="2.8" fill="#111"/><rect x="7" y="6" width="3" height="2.6" fill="#8a8a8a"/><path d="M9 2.6 C11.3 2.6 12.8 4 13.4 6.6" fill="none" stroke="#111" stroke-width="1.3"/><path d="M9.8 0.2 L6.3 2.5 L9.8 4.8 Z" fill="#111"/></svg>
<div style="position:absolute;left:244.5px;top:596px;width:946.0px;height:2px;background:#f3f3f3"></div>
<div style="position:absolute;left:252.3px;top:579px;width:7px;height:7px;border-radius:2px;border:1px solid #cfcfcf;background:#fff"></div>
<svg style="position:absolute;left:275.8px;top:579px" width="12" height="9" viewBox="0 0 12 9"><rect x="0.6" y="0.6" width="10" height="6.6" rx="0.9" fill="#fff" stroke="#a99d88" stroke-width="1.1"/><rect x="1.2" y="1.2" width="4" height="5.4" fill="#dcd2bf"/><path d="M2.7 1.5 L2.7 6.3" stroke="#c3b8a2" stroke-width="0.8"/><path d="M7.9 1.5 L9.4 3.7 L8.5 3.7 L8.5 6.2 L7.3 6.2 L7.3 3.7 L6.4 3.7 Z" fill="#3f3a2e"/></svg>
<div style="position:absolute;left:294px;top:577px;width:1px;height:13px;background:#e0e0e0"></div>
<div class="t" style="left:298.70px;top:579.00px;font-size:10.4px;letter-spacing:0.3px;transform:scaleX(0.8693);transform-origin:0 0;color:#0b8ee6;font-weight:normal;-webkit-text-stroke:0.25px #0b8ee6;">Testje</div>
<div class="t" style="left:423.30px;top:579.00px;font-size:10.4px;letter-spacing:0.3px;transform:scaleX(0.8793);transform-origin:0 0;color:#1a1a1a;font-weight:normal;-webkit-text-stroke:0.25px #1a1a1a;width:250px;overflow:hidden">kmp-w12r2-1</div>
<div class="t" style="left:551.80px;top:579.00px;font-size:10.4px;letter-spacing:0.3px;transform:scaleX(0.8270);transform-origin:0 0;color:#1a1a1a;font-weight:normal;-webkit-text-stroke:0.25px #1a1a1a;">KMP-W12R2-1-CA</div>
<div class="t" style="left:654.70px;top:579.00px;font-size:10.4px;letter-spacing:0.3px;transform:scaleX(0.8442);transform-origin:0 0;color:#1a1a1a;font-weight:normal;-webkit-text-stroke:0.25px #1a1a1a;">Apr 20, 2019</div>
<div class="t" style="left:731.50px;top:579.00px;font-size:10.4px;letter-spacing:0.3px;transform:scaleX(0.8432);transform-origin:0 0;color:#1a1a1a;font-weight:normal;-webkit-text-stroke:0.25px #1a1a1a;">135</div>
<div class="t" style="left:762.10px;top:579.00px;font-size:10.4px;letter-spacing:0.3px;transform:scaleX(0.8902);transform-origin:0 0;color:#1a1a1a;font-weight:normal;-webkit-text-stroke:0.25px #1a1a1a;">4096</div>
<div class="t" style="left:810.70px;top:579.00px;font-size:10.4px;letter-spacing:0.3px;transform:scaleX(0.8275);transform-origin:0 0;color:#1a1a1a;font-weight:normal;-webkit-text-stroke:0.25px #1a1a1a;">SHA256</div>
<div class="t" style="left:914.10px;top:579.00px;font-size:10.4px;letter-spacing:0.3px;transform:scaleX(0.8132);transform-origin:0 0;color:#1a1a1a;font-weight:normal;-webkit-text-stroke:0.25px #1a1a1a;">NA</div>
<svg style="position:absolute;left:1092.5px;top:578px" width="14" height="10" viewBox="0 0 14 10" fill="none"><path d="M8.5 7.5 L1.8 7.5 A0.9 0.9 0 0 1 0.9 6.6 L0.9 1.6 A0.9 0.9 0 0 1 1.8 0.7 L10 0.7 A0.9 0.9 0 0 1 10.9 1.6 L10.9 3.5" stroke="#cfcfcf" stroke-width="1.1"/><path d="M3.8 6 L3.8 2.8 M2.8 3.8 L3.8 2.6 L4.8 3.8" stroke="#c4c4c4" stroke-width="0.9"/><path d="M6.3 2.6 L8 2.6 M7.3 2.6 L7 4.2" stroke="#cfcfcf" stroke-width="0.7"/><path d="M8.9 8.4 L11.6 5" stroke="#c4c4c4" stroke-width="1.4" stroke-linecap="round"/></svg>
<svg style="position:absolute;left:1121.5px;top:576px" width="13" height="13" viewBox="0 0 13 13" fill="none" stroke="#cdcdcd" stroke-width="0.9"><path d="M3.6 8.2 A4 4 0 1 1 9 3.5"/><path d="M2.8 2.8 L4.8 4.3 L3.4 5.8"/><rect x="3.2" y="5.6" width="9" height="6.3" rx="0.5" fill="#fff"/><path d="M3.2 7.5 L12.2 7.5"/><path d="M5.3 9.6 L6.5 9.6 M8.2 9.6 L10 9.6"/></svg>
<svg style="position:absolute;left:1150px;top:576px" width="15" height="12" viewBox="0 0 15 12"><path d="M5.6 2.6 L1.9 2.6 A1.2 1.2 0 0 0 0.7 3.8 L0.7 9.4 A1.2 1.2 0 0 0 1.9 10.6 L10.4 10.6 A1.2 1.2 0 0 0 11.6 9.4 L11.6 6" fill="none" stroke="#111" stroke-width="1.3"/><rect x="3" y="5" width="2.2" height="2.8" fill="#111"/><rect x="7" y="6" width="3" height="2.6" fill="#8a8a8a"/><path d="M9 2.6 C11.3 2.6 12.8 4 13.4 6.6" fill="none" stroke="#111" stroke-width="1.3"/><path d="M9.8 0.2 L6.3 2.5 L9.8 4.8 Z" fill="#111"/></svg>
<div style="position:absolute;left:252.3px;top:606px;width:7px;height:7px;border-radius:2px;border:1px solid #cfcfcf;background:#fff"></div>
<svg style="position:absolute;left:275.8px;top:606px" width="12" height="9" viewBox="0 0 12 9"><rect x="0.6" y="0.6" width="10" height="6.6" rx="0.9" fill="#fff" stroke="#a99d88" stroke-width="1.1"/><rect x="1.2" y="1.2" width="4" height="5.4" fill="#dcd2bf"/><path d="M2.7 1.5 L2.7 6.3" stroke="#c3b8a2" stroke-width="0.8"/><path d="M7.9 1.5 L9.4 3.7 L8.5 3.7 L8.5 6.2 L7.3 6.2 L7.3 3.7 L6.4 3.7 Z" fill="#3f3a2e"/></svg>
<div style="position:absolute;left:294px;top:604px;width:1px;height:13px;background:#e0e0e0"></div>
<div class="t" style="left:298.70px;top:606.00px;font-size:10.4px;letter-spacing:0.3px;transform:scaleX(0.8924);transform-origin:0 0;color:#0b8ee6;font-weight:normal;-webkit-text-stroke:0.25px #0b8ee6;">*.google.com</div>
<div class="t" style="left:423.30px;top:606.00px;font-size:10.4px;letter-spacing:0.3px;transform:scaleX(0.8793);transform-origin:0 0;color:#1a1a1a;font-weight:normal;-webkit-text-stroke:0.25px #1a1a1a;width:250px;overflow:hidden">maa05s06-in-f14.1e100.net</div>
<div class="t" style="left:551.80px;top:606.00px;font-size:10.4px;letter-spacing:0.3px;transform:scaleX(0.8721);transform-origin:0 0;color:#1a1a1a;font-weight:normal;-webkit-text-stroke:0.25px #1a1a1a;">Google Internet Aut...</div>
<div class="t" style="left:654.70px;top:606.00px;font-size:10.4px;letter-spacing:0.3px;transform:scaleX(0.8442);transform-origin:0 0;color:#1a1a1a;font-weight:normal;-webkit-text-stroke:0.25px #1a1a1a;">Jan 30, 2019</div>
<div class="t" style="left:731.50px;top:606.00px;font-size:10.4px;letter-spacing:0.3px;transform:scaleX(0.8432);transform-origin:0 0;color:#1a1a1a;font-weight:normal;-webkit-text-stroke:0.25px #1a1a1a;">55</div>
<div class="t" style="left:762.10px;top:606.00px;font-size:10.4px;letter-spacing:0.3px;transform:scaleX(0.8902);transform-origin:0 0;color:#1a1a1a;font-weight:normal;-webkit-text-stroke:0.25px #1a1a1a;">256</div>
<div class="t" style="left:810.70px;top:606.00px;font-size:10.4px;letter-spacing:0.3px;transform:scaleX(0.8275);transform-origin:0 0;color:#1a1a1a;font-weight:normal;-webkit-text-stroke:0.25px #1a1a1a;">SHA256</div>
<div class="t" style="left:914.10px;top:606.00px;font-size:10.4px;letter-spacing:0.3px;transform:scaleX(0.8132);transform-origin:0 0;color:#1a1a1a;font-weight:normal;-webkit-text-stroke:0.25px #1a1a1a;">NA</div>
<svg style="position:absolute;left:1092.5px;top:605px" width="14" height="10" viewBox="0 0 14 10" fill="none"><path d="M8.5 7.5 L1.8 7.5 A0.9 0.9 0 0 1 0.9 6.6 L0.9 1.6 A0.9 0.9 0 0 1 1.8 0.7 L10 0.7 A0.9 0.9 0 0 1 10.9 1.6 L10.9 3.5" stroke="#cfcfcf" stroke-width="1.1"/><path d="M3.8 6 L3.8 2.8 M2.8 3.8 L3.8 2.6 L4.8 3.8" stroke="#c4c4c4" stroke-width="0.9"/><path d="M6.3 2.6 L8 2.6 M7.3 2.6 L7 4.2" stroke="#cfcfcf" stroke-width="0.7"/><path d="M8.9 8.4 L11.6 5" stroke="#c4c4c4" stroke-width="1.4" stroke-linecap="round"/></svg>
<svg style="position:absolute;left:1121.5px;top:603px" width="13" height="13" viewBox="0 0 13 13" fill="none" stroke="#cdcdcd" stroke-width="0.9"><path d="M3.6 8.2 A4 4 0 1 1 9 3.5"/><path d="M2.8 2.8 L4.8 4.3 L3.4 5.8"/><rect x="3.2" y="5.6" width="9" height="6.3" rx="0.5" fill="#fff"/><path d="M3.2 7.5 L12.2 7.5"/><path d="M5.3 9.6 L6.5 9.6 M8.2 9.6 L10 9.6"/></svg>
<svg style="position:absolute;left:1150px;top:604px" width="15" height="12" viewBox="0 0 15 12"><path d="M5.6 2.6 L1.9 2.6 A1.2 1.2 0 0 0 0.7 3.8 L0.7 9.4 A1.2 1.2 0 0 0 1.9 10.6 L10.4 10.6 A1.2 1.2 0 0 0 11.6 9.4 L11.6 6" fill="none" stroke="#111" stroke-width="1.3"/><rect x="3" y="5" width="2.2" height="2.8" fill="#111"/><rect x="7" y="6" width="3" height="2.6" fill="#8a8a8a"/><path d="M9 2.6 C11.3 2.6 12.8 4 13.4 6.6" fill="none" stroke="#111" stroke-width="1.3"/><path d="M9.8 0.2 L6.3 2.5 L9.8 4.8 Z" fill="#111"/></svg>
<div style="position:absolute;left:488px;top:105px;width:132px;height:239px;background:#fff;border-radius:2px;box-shadow:0 1px 4px rgba(0,0,0,0.22);border:none"></div>
<div class="t" style="left:502.60px;top:116.00px;font-size:10.2px;letter-spacing:0.3px;transform:scaleX(0.8846);transform-origin:0 0;color:#404040;font-weight:normal;-webkit-text-stroke:0.18px #404040;">Create Group</div>
<div class="t" style="left:502.60px;top:140.00px;font-size:10.2px;letter-spacing:0.3px;transform:scaleX(0.8833);transform-origin:0 0;color:#404040;font-weight:normal;-webkit-text-stroke:0.18px #404040;">Check Domain Expiry</div>
<div class="t" style="left:502.60px;top:163.00px;font-size:10.2px;letter-spacing:0.3px;transform:scaleX(0.8766);transform-origin:0 0;color:#404040;font-weight:normal;-webkit-text-stroke:0.18px #404040;">Mark as Root</div>
<div class="t" style="left:502.60px;top:186.00px;font-size:10.2px;letter-spacing:0.3px;transform:scaleX(0.8657);transform-origin:0 0;color:#404040;font-weight:normal;-webkit-text-stroke:0.18px #404040;">Sync with CMDB</div>
<div class="t" style="left:502.60px;top:209.00px;font-size:10.2px;letter-spacing:0.3px;transform:scaleX(0.8952);transform-origin:0 0;color:#404040;font-weight:normal;-webkit-text-stroke:0.18px #404040;">Import Keys</div>
<div class="t" style="left:502.60px;top:232.00px;font-size:10.2px;letter-spacing:0.3px;transform:scaleX(0.8543);transform-origin:0 0;color:#404040;font-weight:normal;-webkit-text-stroke:0.18px #404040;">Edit</div>
<div class="t" style="left:502.60px;top:256.00px;font-size:10.2px;letter-spacing:0.3px;transform:scaleX(0.8742);transform-origin:0 0;color:#404040;font-weight:normal;-webkit-text-stroke:0.18px #404040;">Share With Users</div>
<div class="t" style="left:502.60px;top:279.00px;font-size:10.2px;letter-spacing:0.3px;transform:scaleX(0.8780);transform-origin:0 0;color:#404040;font-weight:normal;-webkit-text-stroke:0.18px #404040;">Share With User Groups</div>
<div class="t" style="left:502.60px;top:302.00px;font-size:10.2px;letter-spacing:0.3px;transform:scaleX(0.8751);transform-origin:0 0;color:#404040;font-weight:normal;-webkit-text-stroke:0.18px #404040;">Share Report</div>
<div class="t" style="left:502.60px;top:325.00px;font-size:10.2px;letter-spacing:0.3px;transform:scaleX(0.8877);transform-origin:0 0;color:#404040;font-weight:normal;-webkit-text-stroke:0.18px #404040;">Delete</div>
</body></html>
